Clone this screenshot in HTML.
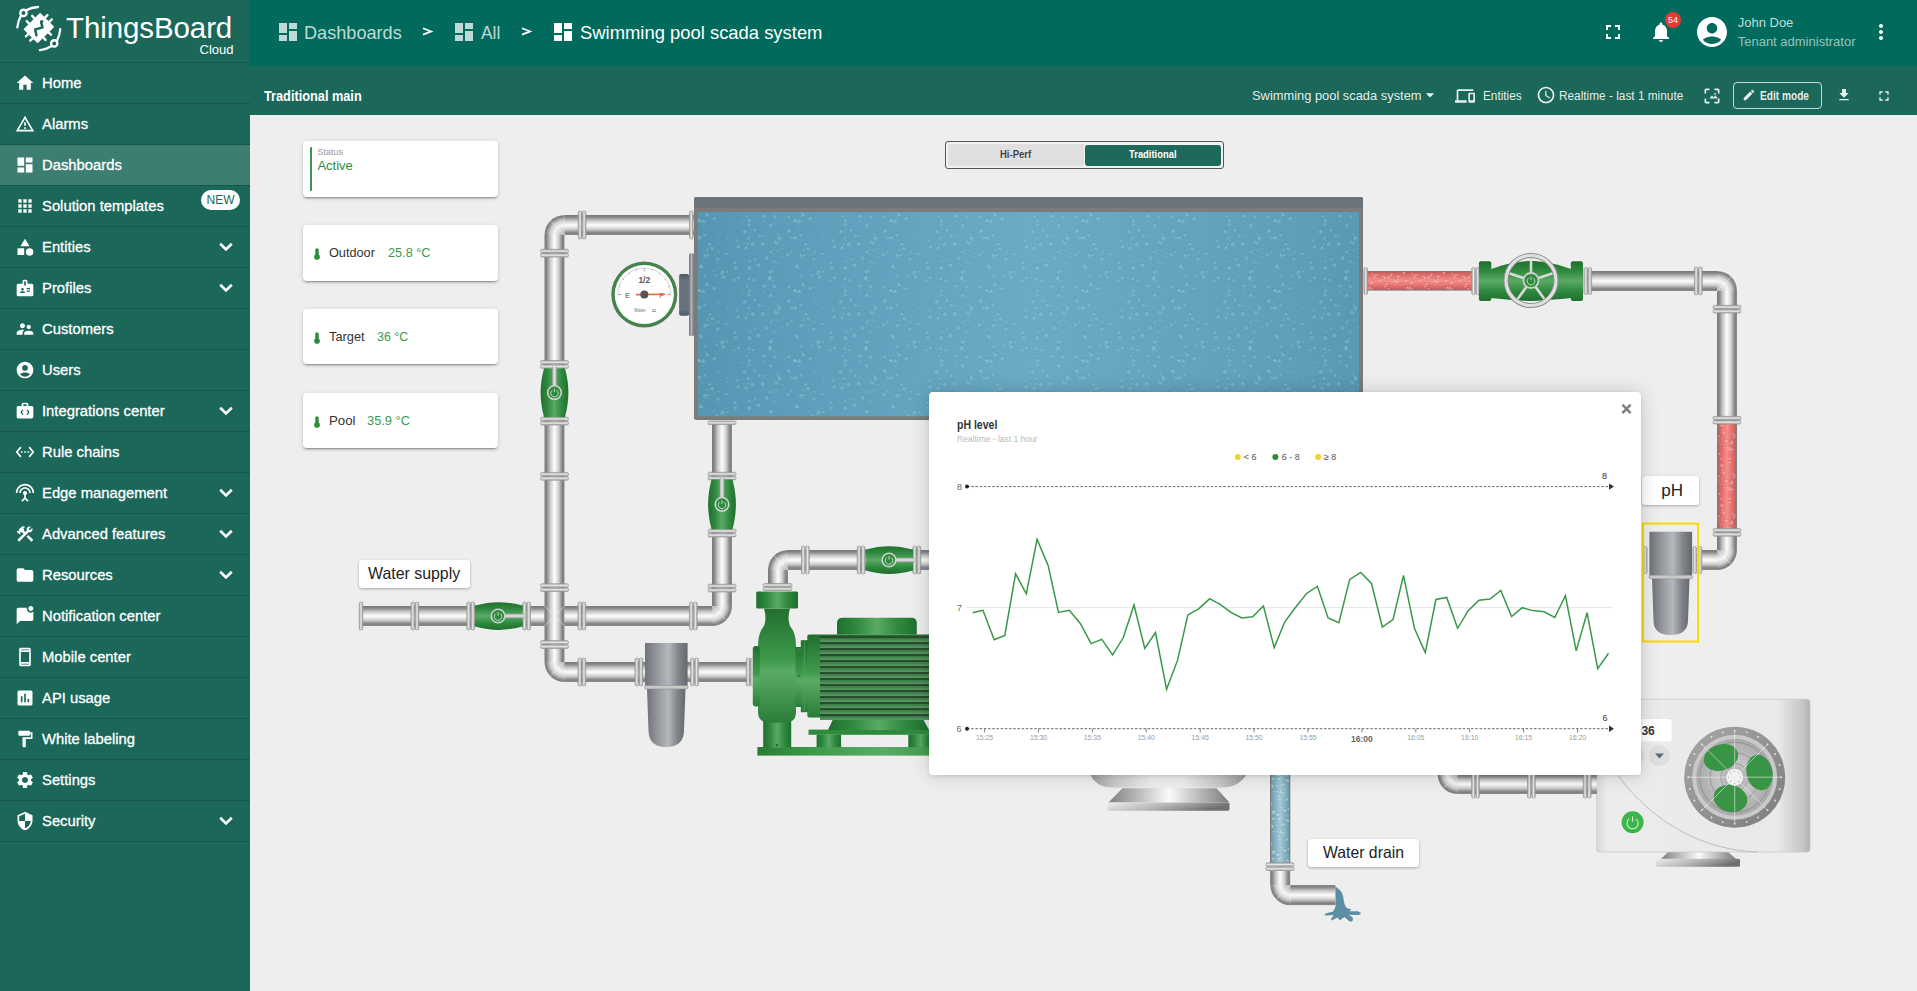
<!DOCTYPE html>
<html><head><meta charset="utf-8">
<style>
*{box-sizing:border-box;margin:0;padding:0}
html,body{width:1917px;height:991px;overflow:hidden;background:#eeeeee;font-family:"Liberation Sans",sans-serif;position:relative}
</style></head><body>
<div style="position:absolute;left:0;top:0;width:250px;height:991px;background:#1b675a;overflow:hidden">
<svg style="position:absolute;left:12px;top:2px" width="54" height="54" viewBox="0 0 991 991">
<g fill="none" stroke="#fff" stroke-width="42" stroke-linecap="round">
<circle cx="210" cy="200" r="58"/><path d="M262 152 Q350 100 478 92"/><path d="M160 255 Q112 350 98 465"/>
<circle cx="775" cy="760" r="58"/><path d="M828 705 Q876 610 885 500"/><path d="M722 812 Q630 868 512 882"/>
</g>
<polygon points="515,215 755,455 470,735 230,500" fill="#fff" stroke="#fff" stroke-width="30" stroke-linejoin="round"/>
<g stroke="#fff" stroke-width="44" stroke-linecap="round">
<path d="M325 405 L270 350 M420 310 L370 255 M595 295 L650 240 M675 375 L730 320 M660 548 L715 600 M565 642 L615 695 M390 657 L335 710 M310 578 L255 630"/>
</g>
<g fill="none" stroke="#1b675a" stroke-width="46" stroke-linecap="round" stroke-linejoin="round">
<path d="M535 375 L560 465 L425 505 L448 612"/>
</g>
<circle cx="545" cy="360" r="30" fill="#1b675a"/>
</svg>
<div style="position:absolute;left:66px;top:12.83px;font-size:29.5px;line-height:29.5px;color:#fff;font-weight:normal;white-space:nowrap;letter-spacing:-0.1px">ThingsBoard</div>
<div style="position:absolute;left:199.5px;top:42.50px;font-size:13px;line-height:13px;color:#fff;font-weight:normal;white-space:nowrap;">Cloud</div>
<div style="position:absolute;left:0;top:62px;width:250px;height:1px;background:rgba(0,0,0,0.18)"></div>
<div style="position:absolute;left:0;top:63px;width:250px;height:40px;background:transparent"></div>
<div style="position:absolute;left:0;top:103px;width:250px;height:1px;background:rgba(0,0,0,0.18)"></div>
<svg style="position:absolute;left:14.5px;top:72.5px;width:20px;height:20px" viewBox="0 0 24 24" ><path fill="#fff" d="M10 20v-6h4v6h5v-8h3L12 3 2 12h3v8z"/></svg>
<div style="position:absolute;left:42.3px;top:75.43px;font-size:15.2px;line-height:15.2px;color:#fff;font-weight:normal;white-space:nowrap;transform:scaleX(0.975);transform-origin:0 0;-webkit-text-stroke:0.3px #fff">Home</div>
<div style="position:absolute;left:0;top:104px;width:250px;height:40px;background:transparent"></div>
<div style="position:absolute;left:0;top:144px;width:250px;height:1px;background:rgba(0,0,0,0.18)"></div>
<svg style="position:absolute;left:14.5px;top:113.5px;width:20px;height:20px" viewBox="0 0 24 24" ><path fill="#fff" d="M12 5.99L19.53 19H4.47L12 5.99M12 2L1 21h22L12 2zm1 14h-2v2h2v-2zm0-6h-2v4h2v-4z"/></svg>
<div style="position:absolute;left:42.3px;top:116.43px;font-size:15.2px;line-height:15.2px;color:#fff;font-weight:normal;white-space:nowrap;transform:scaleX(0.975);transform-origin:0 0;-webkit-text-stroke:0.3px #fff">Alarms</div>
<div style="position:absolute;left:0;top:145px;width:250px;height:40px;background:#3d7e72"></div>
<div style="position:absolute;left:0;top:185px;width:250px;height:1px;background:rgba(0,0,0,0.18)"></div>
<svg style="position:absolute;left:14.5px;top:154.5px;width:20px;height:20px" viewBox="0 0 24 24" ><path fill="#fff" d="M3 13h8V3H3v10zm0 8h8v-6H3v6zm10 0h8V11h-8v10zm0-18v6h8V3h-8z"/></svg>
<div style="position:absolute;left:42.3px;top:157.43px;font-size:15.2px;line-height:15.2px;color:#fff;font-weight:normal;white-space:nowrap;transform:scaleX(0.975);transform-origin:0 0;-webkit-text-stroke:0.3px #fff">Dashboards</div>
<div style="position:absolute;left:0;top:186px;width:250px;height:40px;background:transparent"></div>
<div style="position:absolute;left:0;top:226px;width:250px;height:1px;background:rgba(0,0,0,0.18)"></div>
<svg style="position:absolute;left:14.5px;top:195.5px;width:20px;height:20px" viewBox="0 0 24 24" ><path fill="#fff" d="M4 8h4V4H4v4zm6 12h4v-4h-4v4zm-6 0h4v-4H4v4zm0-6h4v-4H4v4zm6 0h4v-4h-4v4zm6-10v4h4V4h-4zm-6 4h4V4h-4v4zm6 6h4v-4h-4v4zm0 6h4v-4h-4v4z"/></svg>
<div style="position:absolute;left:42.3px;top:198.43px;font-size:15.2px;line-height:15.2px;color:#fff;font-weight:normal;white-space:nowrap;transform:scaleX(0.975);transform-origin:0 0;-webkit-text-stroke:0.3px #fff">Solution templates</div>
<div style="position:absolute;left:0;top:227px;width:250px;height:40px;background:transparent"></div>
<div style="position:absolute;left:0;top:267px;width:250px;height:1px;background:rgba(0,0,0,0.18)"></div>
<svg style="position:absolute;left:14.5px;top:236.5px;width:20px;height:20px" viewBox="0 0 24 24" ><path fill="#fff" d="M12 2l-5.5 9h11zM17.5 13.5a4.5 4.5 0 1 0 0 9 4.5 4.5 0 0 0 0-9zM3 21.5h8v-8H3z"/></svg>
<div style="position:absolute;left:42.3px;top:239.43px;font-size:15.2px;line-height:15.2px;color:#fff;font-weight:normal;white-space:nowrap;transform:scaleX(0.975);transform-origin:0 0;-webkit-text-stroke:0.3px #fff">Entities</div>
<svg style="position:absolute;left:218px;top:239px;width:16px;height:16px" viewBox="0 0 16 16"><path d="M2.2 4.8 L8 10.4 L13.8 4.8" fill="none" stroke="#fff" stroke-width="2.6"/></svg>
<div style="position:absolute;left:0;top:268px;width:250px;height:40px;background:transparent"></div>
<div style="position:absolute;left:0;top:308px;width:250px;height:1px;background:rgba(0,0,0,0.18)"></div>
<svg style="position:absolute;left:14.5px;top:277.5px;width:20px;height:20px" viewBox="0 0 24 24" ><path fill="#fff" d="M20 7h-5V4c0-1.1-.9-2-2-2h-2c-1.1 0-2 .9-2 2v3H4c-1.1 0-2 .9-2 2v11c0 1.1.9 2 2 2h16c1.1 0 2-.9 2-2V9c0-1.1-.9-2-2-2zM9 12c.83 0 1.5.67 1.5 1.5S9.830 15 9 15s-1.5-.67-1.5-1.5S8.17 12 9 12zm3 6H6v-.75c0-1 2-1.5 3-1.5s3 .5 3 1.5V18zm1-9h-2V4h2v5zm5 7.5h-4V15h4v1.5zm0-3h-4V12h4v1.5z"/></svg>
<div style="position:absolute;left:42.3px;top:280.43px;font-size:15.2px;line-height:15.2px;color:#fff;font-weight:normal;white-space:nowrap;transform:scaleX(0.975);transform-origin:0 0;-webkit-text-stroke:0.3px #fff">Profiles</div>
<svg style="position:absolute;left:218px;top:280px;width:16px;height:16px" viewBox="0 0 16 16"><path d="M2.2 4.8 L8 10.4 L13.8 4.8" fill="none" stroke="#fff" stroke-width="2.6"/></svg>
<div style="position:absolute;left:0;top:309px;width:250px;height:40px;background:transparent"></div>
<div style="position:absolute;left:0;top:349px;width:250px;height:1px;background:rgba(0,0,0,0.18)"></div>
<svg style="position:absolute;left:14.5px;top:318.5px;width:20px;height:20px" viewBox="0 0 24 24" ><path fill="#fff" d="M16.5 12c1.38 0 2.49-1.12 2.49-2.5S17.88 7 16.5 7C15.12 7 14 8.12 14 9.5s1.12 2.5 2.5 2.5zM9 11c1.66 0 2.99-1.34 2.99-3S10.66 5 9 5C7.34 5 6 6.34 6 8s1.34 3 3 3zm7.5 3c-1.83 0-5.5.92-5.5 2.75V19h11v-2.25c0-1.830-3.67-2.75-5.5-2.75zM9 13c-2.33 0-7 1.17-7 3.5V19h7v-2.25c0-.85.33-2.34 2.37-3.47C10.5 13.1 9.66 13 9 13z"/></svg>
<div style="position:absolute;left:42.3px;top:321.43px;font-size:15.2px;line-height:15.2px;color:#fff;font-weight:normal;white-space:nowrap;transform:scaleX(0.975);transform-origin:0 0;-webkit-text-stroke:0.3px #fff">Customers</div>
<div style="position:absolute;left:0;top:350px;width:250px;height:40px;background:transparent"></div>
<div style="position:absolute;left:0;top:390px;width:250px;height:1px;background:rgba(0,0,0,0.18)"></div>
<svg style="position:absolute;left:14.5px;top:359.5px;width:20px;height:20px" viewBox="0 0 24 24" ><path fill="#fff" d="M12 2C6.48 2 2 6.48 2 12s4.48 10 10 10 10-4.48 10-10S17.52 2 12 2zm0 4c1.93 0 3.5 1.57 3.5 3.5S13.93 13 12 13s-3.5-1.57-3.5-3.5S10.07 6 12 6zm0 14c-2.03 0-4.43-.82-6.14-2.88C7.55 15.8 9.68 15 12 15s4.45.8 6.14 2.12C16.43 19.18 14.03 20 12 20z"/></svg>
<div style="position:absolute;left:42.3px;top:362.43px;font-size:15.2px;line-height:15.2px;color:#fff;font-weight:normal;white-space:nowrap;transform:scaleX(0.975);transform-origin:0 0;-webkit-text-stroke:0.3px #fff">Users</div>
<div style="position:absolute;left:0;top:391px;width:250px;height:40px;background:transparent"></div>
<div style="position:absolute;left:0;top:431px;width:250px;height:1px;background:rgba(0,0,0,0.18)"></div>
<svg style="position:absolute;left:14.5px;top:400.5px;width:20px;height:20px" viewBox="0 0 24 24" ><path fill="#fff" d="M20 6h-4V4c0-1.11-.89-2-2-2h-4c-1.11 0-2 .89-2 2v2H4c-1.11 0-1.990.89-1.99 2L2 19c0 1.11.89 2 2 2h16c1.11 0 2-.89 2-2V8c0-1.11-.89-2-2-2zm-6 0h-4V4h4v2z"/></svg>
<svg style="position:absolute;left:14.5px;top:400.5px;width:20px;height:20px" viewBox="0 0 24 24"><path d="M9.5 10.5 L7.5 13.5 L9.5 16.5 M14.5 10.5 L16.5 13.5 L14.5 16.5" fill="none" stroke="#1b675a" stroke-width="1.6"/></svg>
<div style="position:absolute;left:42.3px;top:403.43px;font-size:15.2px;line-height:15.2px;color:#fff;font-weight:normal;white-space:nowrap;transform:scaleX(0.975);transform-origin:0 0;-webkit-text-stroke:0.3px #fff">Integrations center</div>
<svg style="position:absolute;left:218px;top:403px;width:16px;height:16px" viewBox="0 0 16 16"><path d="M2.2 4.8 L8 10.4 L13.8 4.8" fill="none" stroke="#fff" stroke-width="2.6"/></svg>
<div style="position:absolute;left:0;top:432px;width:250px;height:40px;background:transparent"></div>
<div style="position:absolute;left:0;top:472px;width:250px;height:1px;background:rgba(0,0,0,0.18)"></div>
<svg style="position:absolute;left:14.5px;top:441.5px;width:20px;height:20px" viewBox="0 0 24 24" ><path fill="#fff" d="M7.77 6.76L6.23 5.48.82 12l5.41 6.52 1.54-1.28L3.42 12l4.35-5.24zM7 13h2v-2H7v2zm10-2h-2v2h2v-2zm-6 2h2v-2h-2v2zm6.77-7.52l-1.54 1.28L20.58 12l-4.35 5.24 1.54 1.28L23.18 12l-5.41-6.520z"/></svg>
<div style="position:absolute;left:42.3px;top:444.43px;font-size:15.2px;line-height:15.2px;color:#fff;font-weight:normal;white-space:nowrap;transform:scaleX(0.975);transform-origin:0 0;-webkit-text-stroke:0.3px #fff">Rule chains</div>
<div style="position:absolute;left:0;top:473px;width:250px;height:40px;background:transparent"></div>
<div style="position:absolute;left:0;top:513px;width:250px;height:1px;background:rgba(0,0,0,0.18)"></div>
<svg style="position:absolute;left:14.5px;top:482.5px;width:20px;height:20px" viewBox="0 0 24 24" ><path fill="#fff" d="M12 5c-3.87 0-7 3.13-7 7h2c0-2.76 2.24-5 5-5s5 2.24 5 5h2c0-3.87-3.13-7-7-7zm1 9.29c.88-.39 1.5-1.26 1.5-2.29 0-1.38-1.12-2.5-2.5-2.5S9.5 10.62 9.5 12c0 1.02.62 1.9 1.5 2.29v3.3L7.59 21 9 22.41l3-3 3 3L16.41 21 13 17.59v-3.3zM12 1C5.93 1 1 5.93 1 12h2c0-4.97 4.03-9 9-9s9 4.03 9 9h2c0-6.07-4.93-11-11-11z"/></svg>
<div style="position:absolute;left:42.3px;top:485.43px;font-size:15.2px;line-height:15.2px;color:#fff;font-weight:normal;white-space:nowrap;transform:scaleX(0.975);transform-origin:0 0;-webkit-text-stroke:0.3px #fff">Edge management</div>
<svg style="position:absolute;left:218px;top:485px;width:16px;height:16px" viewBox="0 0 16 16"><path d="M2.2 4.8 L8 10.4 L13.8 4.8" fill="none" stroke="#fff" stroke-width="2.6"/></svg>
<div style="position:absolute;left:0;top:514px;width:250px;height:40px;background:transparent"></div>
<div style="position:absolute;left:0;top:554px;width:250px;height:1px;background:rgba(0,0,0,0.18)"></div>
<svg style="position:absolute;left:14.5px;top:523.5px;width:20px;height:20px" viewBox="0 0 24 24" ><path fill="#fff" d="M13.783 15.172l2.121-2.121 5.996 5.996-2.121 2.121zM17.5 10c1.93 0 3.5-1.57 3.5-3.5 0-.58-.16-1.12-.41-1.6l-2.7 2.7-1.49-1.49 2.7-2.7c-.48-.25-1.02-.41-1.6-.41C15.57 3 14 4.57 14 6.5c0 .41.08.8.21 1.16l-1.85 1.85-1.78-1.78.71-.71-1.41-1.41L12 3.49c-1.17-1.17-3.07-1.17-4.24 0L4.22 7.030l1.41 1.41H2.81l-.71.71 3.54 3.54.71-.71V9.15l1.41 1.41.71-.71 1.78 1.78-7.41 7.41 2.12 2.12L16.34 9.79c.36.13.75.21 1.160.21z"/></svg>
<div style="position:absolute;left:42.3px;top:526.43px;font-size:15.2px;line-height:15.2px;color:#fff;font-weight:normal;white-space:nowrap;transform:scaleX(0.975);transform-origin:0 0;-webkit-text-stroke:0.3px #fff">Advanced features</div>
<svg style="position:absolute;left:218px;top:526px;width:16px;height:16px" viewBox="0 0 16 16"><path d="M2.2 4.8 L8 10.4 L13.8 4.8" fill="none" stroke="#fff" stroke-width="2.6"/></svg>
<div style="position:absolute;left:0;top:555px;width:250px;height:40px;background:transparent"></div>
<div style="position:absolute;left:0;top:595px;width:250px;height:1px;background:rgba(0,0,0,0.18)"></div>
<svg style="position:absolute;left:14.5px;top:564.5px;width:20px;height:20px" viewBox="0 0 24 24" ><path fill="#fff" d="M10 4H4c-1.1 0-1.99.9-1.99 2L2 18c0 1.1.9 2 2 2h16c1.1 0 2-.9 2-2V8c0-1.1-.9-2-2-2h-8l-2-2z"/></svg>
<div style="position:absolute;left:42.3px;top:567.43px;font-size:15.2px;line-height:15.2px;color:#fff;font-weight:normal;white-space:nowrap;transform:scaleX(0.975);transform-origin:0 0;-webkit-text-stroke:0.3px #fff">Resources</div>
<svg style="position:absolute;left:218px;top:567px;width:16px;height:16px" viewBox="0 0 16 16"><path d="M2.2 4.8 L8 10.4 L13.8 4.8" fill="none" stroke="#fff" stroke-width="2.6"/></svg>
<div style="position:absolute;left:0;top:596px;width:250px;height:40px;background:transparent"></div>
<div style="position:absolute;left:0;top:636px;width:250px;height:1px;background:rgba(0,0,0,0.18)"></div>
<svg style="position:absolute;left:14.5px;top:605.5px;width:20px;height:20px" viewBox="0 0 24 24" ><path fill="#fff" d="M22 6.98V16c0 1.1-.9 2-2 2H6l-4 4V4c0-1.1.9-2 2-2h10.1c-.06.32-.1.66-.1 1 0 2.76 2.24 5 5 5 1.13 0 2.16-.39 3-1.02zM16 3c0 1.66 1.34 3 3 3s3-1.34 3-3-1.34-3-3-3-3 1.34-3 3z"/></svg>
<div style="position:absolute;left:42.3px;top:608.43px;font-size:15.2px;line-height:15.2px;color:#fff;font-weight:normal;white-space:nowrap;transform:scaleX(0.975);transform-origin:0 0;-webkit-text-stroke:0.3px #fff">Notification center</div>
<div style="position:absolute;left:0;top:637px;width:250px;height:40px;background:transparent"></div>
<div style="position:absolute;left:0;top:677px;width:250px;height:1px;background:rgba(0,0,0,0.18)"></div>
<svg style="position:absolute;left:14.5px;top:646.5px;width:20px;height:20px" viewBox="0 0 24 24" ><path fill="#fff" d="M17 1H7c-1.1 0-2 .9-2 2v18c0 1.1.9 2 2 2h10c1.1 0 2-.9 2-2V3c0-1.1-.9-2-2-2zm0 20H7v-1h10v1zm0-3H7V6h10v12zm0-14H7V3h10v1z"/></svg>
<div style="position:absolute;left:42.3px;top:649.43px;font-size:15.2px;line-height:15.2px;color:#fff;font-weight:normal;white-space:nowrap;transform:scaleX(0.975);transform-origin:0 0;-webkit-text-stroke:0.3px #fff">Mobile center</div>
<div style="position:absolute;left:0;top:678px;width:250px;height:40px;background:transparent"></div>
<div style="position:absolute;left:0;top:718px;width:250px;height:1px;background:rgba(0,0,0,0.18)"></div>
<svg style="position:absolute;left:14.5px;top:687.5px;width:20px;height:20px" viewBox="0 0 24 24" ><path fill="#fff" d="M19 3H5c-1.1 0-2 .9-2 2v14c0 1.1.9 2 2 2h14c1.1 0 2-.9 2-2V5c0-1.1-.9-2-2-2zM9 17H7v-7h2v7zm4 0h-2V7h2v10zm4 0h-2v-4h2v4z"/></svg>
<div style="position:absolute;left:42.3px;top:690.43px;font-size:15.2px;line-height:15.2px;color:#fff;font-weight:normal;white-space:nowrap;transform:scaleX(0.975);transform-origin:0 0;-webkit-text-stroke:0.3px #fff">API usage</div>
<div style="position:absolute;left:0;top:719px;width:250px;height:40px;background:transparent"></div>
<div style="position:absolute;left:0;top:759px;width:250px;height:1px;background:rgba(0,0,0,0.18)"></div>
<svg style="position:absolute;left:14.5px;top:728.5px;width:20px;height:20px" viewBox="0 0 24 24" ><path fill="#fff" d="M18 4V3c0-.55-.45-1-1-1H5c-.55 0-1 .45-1 1v4c0 .55.45 1 1 1h12c.55 0 1-.45 1-1V6h1v4H9v11c0 .55.45 1 1 1h2c.55 0 1-.45 1-1v-9h8V4h-3z"/></svg>
<div style="position:absolute;left:42.3px;top:731.43px;font-size:15.2px;line-height:15.2px;color:#fff;font-weight:normal;white-space:nowrap;transform:scaleX(0.975);transform-origin:0 0;-webkit-text-stroke:0.3px #fff">White labeling</div>
<div style="position:absolute;left:0;top:760px;width:250px;height:40px;background:transparent"></div>
<div style="position:absolute;left:0;top:800px;width:250px;height:1px;background:rgba(0,0,0,0.18)"></div>
<svg style="position:absolute;left:14.5px;top:769.5px;width:20px;height:20px" viewBox="0 0 24 24" ><path fill="#fff" d="M19.14 12.94c.04-.3.06-.61.06-.94 0-.32-.02-.64-.07-.94l2.03-1.58c.18-.14.23-.41.12-.61l-1.92-3.32c-.12-.22-.37-.29-.59-.22l-2.39.96c-.5-.38-1.030-.7-1.62-.94l-.36-2.54c-.04-.24-.24-.41-.48-.41h-3.84c-.24 0-.43.17-.47.41l-.36 2.54c-.59.24-1.13.57-1.62.94l-2.39-.96c-.22-.08-.47 0-.59.22L2.74 8.87c-.12.21-.08.47.12.61l2.03 1.58c-.05.3-.09.63-.09.94s.02.64.07.94l-2.03 1.58c-.18.14-.23.41-.12.61l1.92 3.32c.12.22.37.29.59.22l2.39-.96c.5.38 1.03.7 1.62.94l.36 2.54c.05.24.24.41.48.41h3.84c.24 0 .44-.17.47-.41l.36-2.54c.59-.24 1.13-.56 1.62-.94l2.39.96c.22.08.47 0 .59-.22l1.92-3.32c.12-.22.07-.47-.12-.61l-2.01-1.58zM12 15.6c-1.98 0-3.6-1.62-3.6-3.6s1.62-3.6 3.6-3.6 3.6 1.62 3.6 3.6-1.62 3.6-3.6 3.6z"/></svg>
<div style="position:absolute;left:42.3px;top:772.43px;font-size:15.2px;line-height:15.2px;color:#fff;font-weight:normal;white-space:nowrap;transform:scaleX(0.975);transform-origin:0 0;-webkit-text-stroke:0.3px #fff">Settings</div>
<div style="position:absolute;left:0;top:801px;width:250px;height:40px;background:transparent"></div>
<div style="position:absolute;left:0;top:841px;width:250px;height:1px;background:rgba(0,0,0,0.18)"></div>
<svg style="position:absolute;left:14.5px;top:810.5px;width:20px;height:20px" viewBox="0 0 24 24" ><path fill="#fff" d="M12 1L3 5v6c0 5.55 3.84 10.74 9 12 5.16-1.26 9-6.45 9-12V5l-9-4zm0 10.99h7c-.53 4.12-3.28 7.79-7 8.94V12H5V6.3l7-3.11v8.8z"/></svg>
<div style="position:absolute;left:42.3px;top:813.43px;font-size:15.2px;line-height:15.2px;color:#fff;font-weight:normal;white-space:nowrap;transform:scaleX(0.975);transform-origin:0 0;-webkit-text-stroke:0.3px #fff">Security</div>
<svg style="position:absolute;left:218px;top:813px;width:16px;height:16px" viewBox="0 0 16 16"><path d="M2.2 4.8 L8 10.4 L13.8 4.8" fill="none" stroke="#fff" stroke-width="2.6"/></svg>
<div style="position:absolute;left:201px;top:190px;width:39px;height:20px;border-radius:10px;background:#fff;color:#1b675a;font-size:12px;line-height:20px;text-align:center">NEW</div>
</div>
<div style="position:absolute;left:250px;top:0;width:1667px;height:66px;background:#006a5c"></div>
<svg style="position:absolute;left:276.3px;top:19.7px;width:24px;height:24px" viewBox="0 0 24 24" ><path fill="rgba(255,255,255,0.75)" d="M3 13h8V3H3v10zm0 8h8v-6H3v6zm10 0h8V11h-8v10zm0-18v6h8V3h-8z"/></svg>
<div style="position:absolute;left:304.2px;top:24.04px;font-size:18.5px;line-height:18.5px;color:rgba(255,255,255,0.75);font-weight:normal;white-space:nowrap;transform:scaleX(0.98);transform-origin:0 0;">Dashboards</div>
<svg style="position:absolute;left:420px;top:25px;width:14px;height:14px" viewBox="0 0 14 14"><path d="M3 3.2 L11.2 6.4 L3 9.6" fill="none" stroke="#fff" stroke-width="1.7"/></svg>
<svg style="position:absolute;left:452.3px;top:19.7px;width:24px;height:24px" viewBox="0 0 24 24" ><path fill="rgba(255,255,255,0.75)" d="M3 13h8V3H3v10zm0 8h8v-6H3v6zm10 0h8V11h-8v10zm0-18v6h8V3h-8z"/></svg>
<div style="position:absolute;left:480.5px;top:24.04px;font-size:18.5px;line-height:18.5px;color:rgba(255,255,255,0.75);font-weight:normal;white-space:nowrap;transform:scaleX(0.94);transform-origin:0 0;">All</div>
<svg style="position:absolute;left:519.3px;top:25px;width:14px;height:14px" viewBox="0 0 14 14"><path d="M3 3.2 L11.2 6.4 L3 9.6" fill="none" stroke="#fff" stroke-width="1.7"/></svg>
<svg style="position:absolute;left:551.3px;top:19.7px;width:24px;height:24px" viewBox="0 0 24 24" ><path fill="#fff" d="M3 13h8V3H3v10zm0 8h8v-6H3v6zm10 0h8V11h-8v10zm0-18v6h8V3h-8z"/></svg>
<div style="position:absolute;left:580.2px;top:24.34px;font-size:18.5px;line-height:18.5px;color:#fff;font-weight:normal;white-space:nowrap;transform:scaleX(0.995);transform-origin:0 0;">Swimming pool scada system</div>
<svg style="position:absolute;left:1601px;top:20px;width:24px;height:24px" viewBox="0 0 24 24" ><path fill="#fff" d="M7 14H5v5h5v-2H7v-3zm-2-4h2V7h3V5H5v5zm12 7h-3v2h5v-5h-2v3zM14 5v2h3v3h2V5h-5z"/></svg>
<svg style="position:absolute;left:1649px;top:20px;width:24px;height:24px" viewBox="0 0 24 24" ><path fill="#fff" d="M12 22c1.1 0 2-.9 2-2h-4c0 1.1.89 2 2 2zm6-6v-5c0-3.07-1.64-5.64-4.5-6.32V4c0-.83-.67-1.5-1.5-1.5s-1.5.67-1.5 1.5v.68C7.63 5.36 6 7.92 6 11v5l-2 2v1h16v-1l-2-2z"/></svg>
<div style="position:absolute;left:1665px;top:12px;width:16px;height:16px;border-radius:8px;background:#e53935;color:#fff;font-size:9px;line-height:16px;text-align:center">54</div>
<svg style="position:absolute;left:1693.5px;top:13.5px;width:36px;height:36px" viewBox="0 0 24 24" ><path fill="#fff" d="M12 2C6.48 2 2 6.48 2 12s4.48 10 10 10 10-4.48 10-10S17.52 2 12 2zm0 4c1.93 0 3.5 1.57 3.5 3.5S13.93 13 12 13s-3.5-1.57-3.5-3.5S10.07 6 12 6zm0 14c-2.03 0-4.43-.82-6.14-2.88C7.55 15.8 9.68 15 12 15s4.45.8 6.14 2.12C16.43 19.18 14.03 20 12 20z"/></svg>
<div style="position:absolute;left:1737.7px;top:15.90px;font-size:13px;line-height:13px;color:rgba(255,255,255,0.78);font-weight:normal;white-space:nowrap;">John Doe</div>
<div style="position:absolute;left:1737.7px;top:34.90px;font-size:13px;line-height:13px;color:rgba(255,255,255,0.6);font-weight:normal;white-space:nowrap;">Tenant administrator</div>
<svg style="position:absolute;left:1868.5px;top:20px;width:24px;height:24px" viewBox="0 0 24 24" ><path fill="#fff" d="M12 8c1.1 0 2-.9 2-2s-.9-2-2-2-2 .9-2 2 .9 2 2 2zm0 2c-1.1 0-2 .9-2 2s.9 2 2 2 2-.9 2-2-.9-2-2-2zm0 6c-1.1 0-2 .9-2 2s.9 2 2 2 2-.9 2-2-.9-2-2-2z"/></svg>
<div style="position:absolute;left:250px;top:66px;width:1667px;height:48.5px;background:#1b675a"></div>
<div style="position:absolute;left:264.4px;top:89.15px;font-size:14px;line-height:14px;color:#fff;font-weight:bold;white-space:nowrap;transform:scaleX(0.91);transform-origin:0 0;">Traditional main</div>
<div style="position:absolute;left:1251.5px;top:88.70px;font-size:13px;line-height:13px;color:rgba(255,255,255,0.9);font-weight:normal;white-space:nowrap;transform:scaleX(0.99);transform-origin:0 0;">Swimming pool scada system</div>
<svg style="position:absolute;left:1419.5px;top:85.3px;width:20px;height:20px" viewBox="0 0 24 24" ><path fill="rgba(255,255,255,0.9)" d="M7 10l5 5 5-5z"/></svg>
<svg style="position:absolute;left:1455px;top:85.5px;width:20px;height:20px" viewBox="0 0 24 24" ><path fill="rgba(255,255,255,0.9)" d="M4 6h18V4H4c-1.1 0-2 .9-2 2v11H0v3h14v-3H4V6zm19 2h-6c-.55 0-1 .45-1 1v10c0 .55.45 1 1 1h6c.55 0 1-.45 1-1V9c0-.55-.45-1-1-1zm-1 9h-4v-7h4v7z"/></svg>
<div style="position:absolute;left:1483px;top:89.00px;font-size:13px;line-height:13px;color:rgba(255,255,255,0.9);font-weight:normal;white-space:nowrap;transform:scaleX(0.907);transform-origin:0 0;">Entities</div>
<svg style="position:absolute;left:1536.3px;top:85.3px;width:20px;height:20px" viewBox="0 0 24 24" ><path fill="rgba(255,255,255,0.9)" d="M11.99 2C6.47 2 2 6.48 2 12s4.47 10 9.99 10C17.52 22 22 17.52 22 12S17.52 2 11.99 2zM12 20c-4.42 0-8-3.58-8-8s3.58-8 8-8 8 3.58 8 8-3.58 8-8 8zm.5-13H11v6l5.25 3.15.75-1.23-4.5-2.67z"/></svg>
<div style="position:absolute;left:1558.5px;top:88.80px;font-size:13px;line-height:13px;color:rgba(255,255,255,0.9);font-weight:normal;white-space:nowrap;transform:scaleX(0.91);transform-origin:0 0;">Realtime - last 1 minute</div>
<svg style="position:absolute;left:1702px;top:86px;width:20px;height:20px" viewBox="0 0 24 24" ><path fill="rgba(255,255,255,0.9)" d="M3 5v4h2V5h4V3H5c-1.1 0-2 .9-2 2zm2 10H3v4c0 1.1.9 2 2 2h4v-2H5v-4zm14 4h-4v2h4c1.1 0 2-.9 2-2v-4h-2v4zm0-16h-4v2h4v4h2V5c0-1.1-.9-2-2-2zM12 11l-3 4h10l-3-4-2 2.67z M15.5 8.5a1 1 0 1 0 0.01 0z"/></svg>
<div style="position:absolute;left:1733px;top:82px;width:89px;height:27px;border:1px solid rgba(255,255,255,0.75);border-radius:4px"></div>
<svg style="position:absolute;left:1742px;top:88px;width:14px;height:14px" viewBox="0 0 24 24" ><path fill="rgba(255,255,255,0.9)" d="M3 17.25V21h3.75L17.81 9.94l-3.75-3.75L3 17.25zM20.71 7.04c.39-.39.39-1.02 0-1.41l-2.34-2.34c-.39-.39-1.02-.39-1.41 0l-1.83 1.83 3.75 3.75 1.83-1.83z"/></svg>
<div style="position:absolute;left:1760px;top:89.64px;font-size:12px;line-height:12px;color:rgba(255,255,255,0.9);font-weight:bold;white-space:nowrap;transform:scaleX(0.845);transform-origin:0 0;">Edit mode</div>
<svg style="position:absolute;left:1836px;top:87px;width:16px;height:16px" viewBox="0 0 24 24" ><path fill="rgba(255,255,255,0.9)" d="M19 9h-4V3H9v6H5l7 7 7-7zM5 18v2h14v-2H5z"/></svg>
<svg style="position:absolute;left:1876px;top:87.5px;width:16px;height:16px" viewBox="0 0 24 24" ><path fill="rgba(255,255,255,0.9)" d="M7 14H5v5h5v-2H7v-3zm-2-4h2V7h3V5H5v5zm12 7h-3v2h5v-5h-2v3zM14 5v2h3v3h2V5h-5z"/></svg>
<svg style="position:absolute;left:0;top:0" width="1917" height="991" viewBox="0 0 1917 991" font-family="Liberation Sans, sans-serif">

<defs>
<linearGradient id="gH" x1="0" y1="0" x2="0" y2="1">
<stop offset="0" stop-color="#7a7a7a"/><stop offset="0.1" stop-color="#858585"/><stop offset="0.3" stop-color="#cdcdcd"/>
<stop offset="0.5" stop-color="#fdfdfd"/><stop offset="0.7" stop-color="#d2d2d2"/><stop offset="0.9" stop-color="#7f7f7f"/><stop offset="1" stop-color="#8c8c8c"/>
</linearGradient>
<linearGradient id="gV" x1="0" y1="0" x2="1" y2="0">
<stop offset="0" stop-color="#7a7a7a"/><stop offset="0.1" stop-color="#858585"/><stop offset="0.3" stop-color="#cdcdcd"/>
<stop offset="0.5" stop-color="#fdfdfd"/><stop offset="0.7" stop-color="#d2d2d2"/><stop offset="0.9" stop-color="#7f7f7f"/><stop offset="1" stop-color="#8c8c8c"/>
</linearGradient>
<radialGradient id="gE" cx="0" cy="0" r="1" gradientUnits="objectBoundingBox">
<stop offset="0" stop-color="#bdbdbd"/><stop offset="0.5" stop-color="#f8f8f8"/><stop offset="0.75" stop-color="#cccccc"/><stop offset="1" stop-color="#7d7d7d"/>
</radialGradient>
<linearGradient id="gFl" x1="0" y1="0" x2="1" y2="0">
<stop offset="0" stop-color="#a9a9a9"/><stop offset="0.5" stop-color="#e6e6e6"/><stop offset="1" stop-color="#a0a0a0"/>
</linearGradient>
<linearGradient id="gFlV" x1="0" y1="0" x2="0" y2="1">
<stop offset="0" stop-color="#a9a9a9"/><stop offset="0.5" stop-color="#e6e6e6"/><stop offset="1" stop-color="#a0a0a0"/>
</linearGradient>
<linearGradient id="gGreenH" x1="0" y1="0" x2="0" y2="1">
<stop offset="0" stop-color="#1f6f2e"/><stop offset="0.25" stop-color="#2f8a3e"/><stop offset="0.5" stop-color="#5aaa66"/><stop offset="0.75" stop-color="#2f8a3e"/><stop offset="1" stop-color="#1f6f2e"/>
</linearGradient>
<linearGradient id="gGreenV" x1="0" y1="0" x2="1" y2="0">
<stop offset="0" stop-color="#1f6f2e"/><stop offset="0.25" stop-color="#2f8a3e"/><stop offset="0.5" stop-color="#5aaa66"/><stop offset="0.75" stop-color="#2f8a3e"/><stop offset="1" stop-color="#1f6f2e"/>
</linearGradient>
<linearGradient id="gRedH" x1="0" y1="0" x2="0" y2="1">
<stop offset="0" stop-color="#cf5a5a"/><stop offset="0.5" stop-color="#f98f8a"/><stop offset="1" stop-color="#cf5a5a"/>
</linearGradient>
<linearGradient id="gRedV" x1="0" y1="0" x2="1" y2="0">
<stop offset="0" stop-color="#cf5a5a"/><stop offset="0.5" stop-color="#f98f8a"/><stop offset="1" stop-color="#cf5a5a"/>
</linearGradient>
<linearGradient id="gBlueV" x1="0" y1="0" x2="1" y2="0">
<stop offset="0" stop-color="#6b9db0"/><stop offset="0.5" stop-color="#a6cbd8"/><stop offset="1" stop-color="#6b9db0"/>
</linearGradient>
<linearGradient id="gFilt" x1="0" y1="0" x2="1" y2="0">
<stop offset="0" stop-color="#6f7378"/><stop offset="0.2" stop-color="#8a8e93"/><stop offset="0.55" stop-color="#b4b8bc"/><stop offset="0.8" stop-color="#7f8388"/><stop offset="1" stop-color="#65696e"/>
</linearGradient>
<linearGradient id="gWater" x1="0" y1="0" x2="1" y2="0">
<stop offset="0" stop-color="#5597b2"/><stop offset="0.1" stop-color="#5b9db8"/><stop offset="0.5" stop-color="#6aacc6"/><stop offset="0.9" stop-color="#5e9fba"/><stop offset="1" stop-color="#5899b4"/>
</linearGradient>
<pattern id="pDots" x="0" y="0" width="96" height="70" patternUnits="userSpaceOnUse"><circle cx="31.1" cy="11.2" r="2.0" fill="#a9d6e6" opacity="0.3"/><path d="M29.1 10.6 A2.0 2.0 0 0 1 33.1 10.6" fill="none" stroke="#3f7d95" stroke-width="0.6" opacity="0.35"/><circle cx="4.6" cy="57.7" r="0.8" fill="#a9d6e6" opacity="0.3"/><path d="M3.8 57.5 A0.8 0.8 0 0 1 5.4 57.5" fill="none" stroke="#3f7d95" stroke-width="0.6" opacity="0.35"/><circle cx="35.1" cy="4.6" r="1.8" fill="#a9d6e6" opacity="0.3"/><path d="M33.3 4.1 A1.8 1.8 0 0 1 36.9 4.1" fill="none" stroke="#3f7d95" stroke-width="0.6" opacity="0.35"/><circle cx="20.6" cy="6.5" r="1.5" fill="#a9d6e6" opacity="0.3"/><path d="M19.1 6.0 A1.5 1.5 0 0 1 22.1 6.0" fill="none" stroke="#3f7d95" stroke-width="0.6" opacity="0.35"/><circle cx="6.7" cy="6.8" r="1.5" fill="#a9d6e6" opacity="0.3"/><path d="M5.2 6.3 A1.5 1.5 0 0 1 8.2 6.3" fill="none" stroke="#3f7d95" stroke-width="0.6" opacity="0.35"/><circle cx="5.7" cy="39.9" r="1.0" fill="#a9d6e6" opacity="0.3"/><path d="M4.7 39.6 A1.0 1.0 0 0 1 6.7 39.6" fill="none" stroke="#3f7d95" stroke-width="0.6" opacity="0.35"/><circle cx="60.5" cy="41.0" r="0.8" fill="#a9d6e6" opacity="0.3"/><path d="M59.7 40.8 A0.8 0.8 0 0 1 61.3 40.8" fill="none" stroke="#3f7d95" stroke-width="0.6" opacity="0.35"/><circle cx="55.4" cy="28.1" r="1.0" fill="#a9d6e6" opacity="0.3"/><path d="M54.4 27.8 A1.0 1.0 0 0 1 56.4 27.8" fill="none" stroke="#3f7d95" stroke-width="0.6" opacity="0.35"/><circle cx="4.5" cy="60.5" r="1.2" fill="#a9d6e6" opacity="0.3"/><path d="M3.3 60.1 A1.2 1.2 0 0 1 5.7 60.1" fill="none" stroke="#3f7d95" stroke-width="0.6" opacity="0.35"/><circle cx="40.2" cy="38.4" r="1.8" fill="#a9d6e6" opacity="0.3"/><path d="M38.4 37.8 A1.8 1.8 0 0 1 42.0 37.8" fill="none" stroke="#3f7d95" stroke-width="0.6" opacity="0.35"/><circle cx="29.6" cy="57.4" r="1.0" fill="#a9d6e6" opacity="0.3"/><path d="M28.6 57.1 A1.0 1.0 0 0 1 30.6 57.1" fill="none" stroke="#3f7d95" stroke-width="0.6" opacity="0.35"/><circle cx="9.9" cy="40.3" r="1.0" fill="#a9d6e6" opacity="0.3"/><path d="M8.9 40.0 A1.0 1.0 0 0 1 10.9 40.0" fill="none" stroke="#3f7d95" stroke-width="0.6" opacity="0.35"/><circle cx="35.8" cy="38.6" r="0.8" fill="#a9d6e6" opacity="0.3"/><path d="M35.0 38.3 A0.8 0.8 0 0 1 36.6 38.3" fill="none" stroke="#3f7d95" stroke-width="0.6" opacity="0.35"/><circle cx="54.2" cy="43.8" r="1.5" fill="#a9d6e6" opacity="0.3"/><path d="M52.7 43.3 A1.5 1.5 0 0 1 55.7 43.3" fill="none" stroke="#3f7d95" stroke-width="0.6" opacity="0.35"/><circle cx="65.3" cy="30.3" r="1.2" fill="#a9d6e6" opacity="0.3"/><path d="M64.1 29.9 A1.2 1.2 0 0 1 66.5 29.9" fill="none" stroke="#3f7d95" stroke-width="0.6" opacity="0.35"/><circle cx="44.7" cy="65.0" r="1.2" fill="#a9d6e6" opacity="0.3"/><path d="M43.5 64.6 A1.2 1.2 0 0 1 45.9 64.6" fill="none" stroke="#3f7d95" stroke-width="0.6" opacity="0.35"/><circle cx="28.8" cy="56.2" r="2.0" fill="#a9d6e6" opacity="0.3"/><path d="M26.8 55.6 A2.0 2.0 0 0 1 30.8 55.6" fill="none" stroke="#3f7d95" stroke-width="0.6" opacity="0.35"/><circle cx="74.9" cy="6.1" r="1.2" fill="#a9d6e6" opacity="0.3"/><path d="M73.7 5.7 A1.2 1.2 0 0 1 76.1 5.7" fill="none" stroke="#3f7d95" stroke-width="0.6" opacity="0.35"/><circle cx="50.4" cy="61.9" r="2.0" fill="#a9d6e6" opacity="0.3"/><path d="M48.4 61.3 A2.0 2.0 0 0 1 52.4 61.3" fill="none" stroke="#3f7d95" stroke-width="0.6" opacity="0.35"/><circle cx="43.1" cy="42.9" r="0.8" fill="#a9d6e6" opacity="0.3"/><path d="M42.3 42.6 A0.8 0.8 0 0 1 43.9 42.6" fill="none" stroke="#3f7d95" stroke-width="0.6" opacity="0.35"/><circle cx="11.3" cy="29.6" r="1.2" fill="#a9d6e6" opacity="0.3"/><path d="M10.1 29.3 A1.2 1.2 0 0 1 12.5 29.3" fill="none" stroke="#3f7d95" stroke-width="0.6" opacity="0.35"/><circle cx="14.6" cy="34.5" r="0.8" fill="#a9d6e6" opacity="0.3"/><path d="M13.8 34.2 A0.8 0.8 0 0 1 15.4 34.2" fill="none" stroke="#3f7d95" stroke-width="0.6" opacity="0.35"/><circle cx="92.4" cy="6.0" r="1.8" fill="#a9d6e6" opacity="0.3"/><path d="M90.6 5.4 A1.8 1.8 0 0 1 94.2 5.4" fill="none" stroke="#3f7d95" stroke-width="0.6" opacity="0.35"/><circle cx="55.0" cy="61.6" r="1.2" fill="#a9d6e6" opacity="0.3"/><path d="M53.8 61.3 A1.2 1.2 0 0 1 56.2 61.3" fill="none" stroke="#3f7d95" stroke-width="0.6" opacity="0.35"/><circle cx="32.7" cy="25.0" r="1.5" fill="#a9d6e6" opacity="0.3"/><path d="M31.2 24.5 A1.5 1.5 0 0 1 34.2 24.5" fill="none" stroke="#3f7d95" stroke-width="0.6" opacity="0.35"/><circle cx="55.7" cy="32.2" r="0.8" fill="#a9d6e6" opacity="0.3"/><path d="M54.9 31.9 A0.8 0.8 0 0 1 56.5 31.9" fill="none" stroke="#3f7d95" stroke-width="0.6" opacity="0.35"/><circle cx="90.7" cy="33.8" r="2.0" fill="#a9d6e6" opacity="0.3"/><path d="M88.7 33.2 A2.0 2.0 0 0 1 92.7 33.2" fill="none" stroke="#3f7d95" stroke-width="0.6" opacity="0.35"/><circle cx="6.2" cy="51.5" r="1.2" fill="#a9d6e6" opacity="0.3"/><path d="M5.0 51.2 A1.2 1.2 0 0 1 7.4 51.2" fill="none" stroke="#3f7d95" stroke-width="0.6" opacity="0.35"/><circle cx="62.1" cy="70.0" r="1.5" fill="#a9d6e6" opacity="0.3"/><path d="M60.6 69.5 A1.5 1.5 0 0 1 63.6 69.5" fill="none" stroke="#3f7d95" stroke-width="0.6" opacity="0.35"/><circle cx="62.1" cy="-0.0" r="1.5" fill="#a9d6e6" opacity="0.3"/><path d="M60.6 -0.5 A1.5 1.5 0 0 1 63.6 -0.5" fill="none" stroke="#3f7d95" stroke-width="0.6" opacity="0.35"/><circle cx="27.3" cy="27.6" r="2.0" fill="#a9d6e6" opacity="0.3"/><path d="M25.3 27.0 A2.0 2.0 0 0 1 29.3 27.0" fill="none" stroke="#3f7d95" stroke-width="0.6" opacity="0.35"/><circle cx="33.3" cy="66.2" r="1.2" fill="#a9d6e6" opacity="0.3"/><path d="M32.1 65.8 A1.2 1.2 0 0 1 34.5 65.8" fill="none" stroke="#3f7d95" stroke-width="0.6" opacity="0.35"/><circle cx="16.1" cy="8.4" r="0.8" fill="#a9d6e6" opacity="0.3"/><path d="M15.3 8.2 A0.8 0.8 0 0 1 16.9 8.2" fill="none" stroke="#3f7d95" stroke-width="0.6" opacity="0.35"/><circle cx="20.9" cy="20.7" r="2.0" fill="#a9d6e6" opacity="0.3"/><path d="M18.9 20.1 A2.0 2.0 0 0 1 22.9 20.1" fill="none" stroke="#3f7d95" stroke-width="0.6" opacity="0.35"/><circle cx="23.8" cy="27.8" r="1.5" fill="#a9d6e6" opacity="0.3"/><path d="M22.3 27.4 A1.5 1.5 0 0 1 25.3 27.4" fill="none" stroke="#3f7d95" stroke-width="0.6" opacity="0.35"/><circle cx="7.7" cy="32.0" r="1.8" fill="#a9d6e6" opacity="0.3"/><path d="M5.9 31.4 A1.8 1.8 0 0 1 9.5 31.4" fill="none" stroke="#3f7d95" stroke-width="0.6" opacity="0.35"/><circle cx="26.7" cy="10.0" r="1.5" fill="#a9d6e6" opacity="0.3"/><path d="M25.2 9.6 A1.5 1.5 0 0 1 28.2 9.6" fill="none" stroke="#3f7d95" stroke-width="0.6" opacity="0.35"/><circle cx="82.9" cy="19.9" r="1.5" fill="#a9d6e6" opacity="0.3"/><path d="M81.4 19.5 A1.5 1.5 0 0 1 84.4 19.5" fill="none" stroke="#3f7d95" stroke-width="0.6" opacity="0.35"/><circle cx="94.7" cy="48.2" r="1.5" fill="#a9d6e6" opacity="0.3"/><path d="M93.2 47.8 A1.5 1.5 0 0 1 96.2 47.8" fill="none" stroke="#3f7d95" stroke-width="0.6" opacity="0.35"/><circle cx="-1.3" cy="48.2" r="1.5" fill="#a9d6e6" opacity="0.3"/><path d="M-2.8 47.8 A1.5 1.5 0 0 1 0.2 47.8" fill="none" stroke="#3f7d95" stroke-width="0.6" opacity="0.35"/><circle cx="91.9" cy="10.9" r="1.0" fill="#a9d6e6" opacity="0.3"/><path d="M90.9 10.6 A1.0 1.0 0 0 1 92.9 10.6" fill="none" stroke="#3f7d95" stroke-width="0.6" opacity="0.35"/><circle cx="14.5" cy="46.3" r="0.8" fill="#a9d6e6" opacity="0.3"/><path d="M13.7 46.1 A0.8 0.8 0 0 1 15.3 46.1" fill="none" stroke="#3f7d95" stroke-width="0.6" opacity="0.35"/><circle cx="46.6" cy="41.6" r="1.2" fill="#a9d6e6" opacity="0.3"/><path d="M45.4 41.2 A1.2 1.2 0 0 1 47.8 41.2" fill="none" stroke="#3f7d95" stroke-width="0.6" opacity="0.35"/><circle cx="27.1" cy="10.7" r="1.8" fill="#a9d6e6" opacity="0.3"/><path d="M25.3 10.2 A1.8 1.8 0 0 1 28.9 10.2" fill="none" stroke="#3f7d95" stroke-width="0.6" opacity="0.35"/><circle cx="35.4" cy="39.9" r="1.0" fill="#a9d6e6" opacity="0.3"/><path d="M34.4 39.6 A1.0 1.0 0 0 1 36.4 39.6" fill="none" stroke="#3f7d95" stroke-width="0.6" opacity="0.35"/><circle cx="66.3" cy="36.6" r="1.8" fill="#a9d6e6" opacity="0.3"/><path d="M64.5 36.1 A1.8 1.8 0 0 1 68.1 36.1" fill="none" stroke="#3f7d95" stroke-width="0.6" opacity="0.35"/><circle cx="62.9" cy="52.2" r="1.5" fill="#a9d6e6" opacity="0.3"/><path d="M61.4 51.8 A1.5 1.5 0 0 1 64.4 51.8" fill="none" stroke="#3f7d95" stroke-width="0.6" opacity="0.35"/><circle cx="86.4" cy="55.2" r="2.0" fill="#a9d6e6" opacity="0.3"/><path d="M84.4 54.6 A2.0 2.0 0 0 1 88.4 54.6" fill="none" stroke="#3f7d95" stroke-width="0.6" opacity="0.35"/><circle cx="76.6" cy="27.9" r="1.5" fill="#a9d6e6" opacity="0.3"/><path d="M75.1 27.5 A1.5 1.5 0 0 1 78.1 27.5" fill="none" stroke="#3f7d95" stroke-width="0.6" opacity="0.35"/><circle cx="37.8" cy="34.2" r="1.5" fill="#a9d6e6" opacity="0.3"/><path d="M36.3 33.7 A1.5 1.5 0 0 1 39.3 33.7" fill="none" stroke="#3f7d95" stroke-width="0.6" opacity="0.35"/><circle cx="6.0" cy="5.0" r="1.0" fill="#a9d6e6" opacity="0.3"/><path d="M5.0 4.7 A1.0 1.0 0 0 1 7.0 4.7" fill="none" stroke="#3f7d95" stroke-width="0.6" opacity="0.35"/><circle cx="42.3" cy="8.2" r="1.8" fill="#a9d6e6" opacity="0.3"/><path d="M40.5 7.7 A1.8 1.8 0 0 1 44.1 7.7" fill="none" stroke="#3f7d95" stroke-width="0.6" opacity="0.35"/><circle cx="5.0" cy="0.3" r="1.0" fill="#a9d6e6" opacity="0.3"/><path d="M4.0 0.0 A1.0 1.0 0 0 1 6.0 0.0" fill="none" stroke="#3f7d95" stroke-width="0.6" opacity="0.35"/><circle cx="5.0" cy="70.3" r="1.0" fill="#a9d6e6" opacity="0.3"/><path d="M4.0 70.0 A1.0 1.0 0 0 1 6.0 70.0" fill="none" stroke="#3f7d95" stroke-width="0.6" opacity="0.35"/><circle cx="51.5" cy="67.0" r="1.8" fill="#a9d6e6" opacity="0.3"/><path d="M49.7 66.4 A1.8 1.8 0 0 1 53.3 66.4" fill="none" stroke="#3f7d95" stroke-width="0.6" opacity="0.35"/><circle cx="2.4" cy="61.7" r="1.8" fill="#a9d6e6" opacity="0.3"/><path d="M0.6 61.2 A1.8 1.8 0 0 1 4.2 61.2" fill="none" stroke="#3f7d95" stroke-width="0.6" opacity="0.35"/><circle cx="98.4" cy="61.7" r="1.8" fill="#a9d6e6" opacity="0.3"/><path d="M96.6 61.2 A1.8 1.8 0 0 1 100.2 61.2" fill="none" stroke="#3f7d95" stroke-width="0.6" opacity="0.35"/><circle cx="36.1" cy="44.8" r="1.2" fill="#a9d6e6" opacity="0.3"/><path d="M34.9 44.4 A1.2 1.2 0 0 1 37.3 44.4" fill="none" stroke="#3f7d95" stroke-width="0.6" opacity="0.35"/><circle cx="57.8" cy="33.4" r="0.8" fill="#a9d6e6" opacity="0.3"/><path d="M57.0 33.2 A0.8 0.8 0 0 1 58.6 33.2" fill="none" stroke="#3f7d95" stroke-width="0.6" opacity="0.35"/><circle cx="81.5" cy="70.0" r="1.5" fill="#a9d6e6" opacity="0.3"/><path d="M80.0 69.5 A1.5 1.5 0 0 1 83.0 69.5" fill="none" stroke="#3f7d95" stroke-width="0.6" opacity="0.35"/><circle cx="81.5" cy="-0.0" r="1.5" fill="#a9d6e6" opacity="0.3"/><path d="M80.0 -0.5 A1.5 1.5 0 0 1 83.0 -0.5" fill="none" stroke="#3f7d95" stroke-width="0.6" opacity="0.35"/><circle cx="46.1" cy="22.1" r="1.0" fill="#a9d6e6" opacity="0.3"/><path d="M45.1 21.8 A1.0 1.0 0 0 1 47.1 21.8" fill="none" stroke="#3f7d95" stroke-width="0.6" opacity="0.35"/><circle cx="9.8" cy="24.3" r="1.2" fill="#a9d6e6" opacity="0.3"/><path d="M8.6 24.0 A1.2 1.2 0 0 1 11.0 24.0" fill="none" stroke="#3f7d95" stroke-width="0.6" opacity="0.35"/><circle cx="45.9" cy="49.0" r="1.8" fill="#a9d6e6" opacity="0.3"/><path d="M44.1 48.4 A1.8 1.8 0 0 1 47.7 48.4" fill="none" stroke="#3f7d95" stroke-width="0.6" opacity="0.35"/><circle cx="2.2" cy="67.1" r="1.8" fill="#a9d6e6" opacity="0.3"/><path d="M0.4 66.6 A1.8 1.8 0 0 1 4.0 66.6" fill="none" stroke="#3f7d95" stroke-width="0.6" opacity="0.35"/><circle cx="98.2" cy="67.1" r="1.8" fill="#a9d6e6" opacity="0.3"/><path d="M96.4 66.6 A1.8 1.8 0 0 1 100.0 66.6" fill="none" stroke="#3f7d95" stroke-width="0.6" opacity="0.35"/><circle cx="34.7" cy="48.5" r="0.8" fill="#a9d6e6" opacity="0.3"/><path d="M33.9 48.3 A0.8 0.8 0 0 1 35.5 48.3" fill="none" stroke="#3f7d95" stroke-width="0.6" opacity="0.35"/><circle cx="72.8" cy="21.5" r="2.0" fill="#a9d6e6" opacity="0.3"/><path d="M70.8 20.9 A2.0 2.0 0 0 1 74.8 20.9" fill="none" stroke="#3f7d95" stroke-width="0.6" opacity="0.35"/><circle cx="82.9" cy="49.1" r="1.2" fill="#a9d6e6" opacity="0.3"/><path d="M81.7 48.7 A1.2 1.2 0 0 1 84.1 48.7" fill="none" stroke="#3f7d95" stroke-width="0.6" opacity="0.35"/><circle cx="49.8" cy="63.9" r="1.2" fill="#a9d6e6" opacity="0.3"/><path d="M48.6 63.6 A1.2 1.2 0 0 1 51.0 63.6" fill="none" stroke="#3f7d95" stroke-width="0.6" opacity="0.35"/><circle cx="74.1" cy="37.8" r="1.8" fill="#a9d6e6" opacity="0.3"/><path d="M72.3 37.3 A1.8 1.8 0 0 1 75.9 37.3" fill="none" stroke="#3f7d95" stroke-width="0.6" opacity="0.35"/><circle cx="31.6" cy="15.9" r="1.0" fill="#a9d6e6" opacity="0.3"/><path d="M30.6 15.6 A1.0 1.0 0 0 1 32.6 15.6" fill="none" stroke="#3f7d95" stroke-width="0.6" opacity="0.35"/><circle cx="77.4" cy="57.9" r="2.0" fill="#a9d6e6" opacity="0.3"/><path d="M75.4 57.3 A2.0 2.0 0 0 1 79.4 57.3" fill="none" stroke="#3f7d95" stroke-width="0.6" opacity="0.35"/><circle cx="77.1" cy="14.4" r="1.5" fill="#a9d6e6" opacity="0.3"/><path d="M75.6 14.0 A1.5 1.5 0 0 1 78.6 14.0" fill="none" stroke="#3f7d95" stroke-width="0.6" opacity="0.35"/><circle cx="34.1" cy="2.3" r="0.8" fill="#a9d6e6" opacity="0.3"/><path d="M33.3 2.0 A0.8 0.8 0 0 1 34.9 2.0" fill="none" stroke="#3f7d95" stroke-width="0.6" opacity="0.35"/><circle cx="34.1" cy="72.3" r="0.8" fill="#a9d6e6" opacity="0.3"/><path d="M33.3 72.0 A0.8 0.8 0 0 1 34.9 72.0" fill="none" stroke="#3f7d95" stroke-width="0.6" opacity="0.35"/><circle cx="75.9" cy="33.4" r="1.0" fill="#a9d6e6" opacity="0.3"/><path d="M74.9 33.1 A1.0 1.0 0 0 1 76.9 33.1" fill="none" stroke="#3f7d95" stroke-width="0.6" opacity="0.35"/><circle cx="66.5" cy="67.4" r="1.5" fill="#a9d6e6" opacity="0.3"/><path d="M65.0 67.0 A1.5 1.5 0 0 1 68.0 67.0" fill="none" stroke="#3f7d95" stroke-width="0.6" opacity="0.35"/><circle cx="77.6" cy="51.0" r="1.2" fill="#a9d6e6" opacity="0.3"/><path d="M76.4 50.6 A1.2 1.2 0 0 1 78.8 50.6" fill="none" stroke="#3f7d95" stroke-width="0.6" opacity="0.35"/><circle cx="91.7" cy="25.8" r="1.0" fill="#a9d6e6" opacity="0.3"/><path d="M90.7 25.5 A1.0 1.0 0 0 1 92.7 25.5" fill="none" stroke="#3f7d95" stroke-width="0.6" opacity="0.35"/><circle cx="9.8" cy="33.3" r="1.2" fill="#a9d6e6" opacity="0.3"/><path d="M8.6 32.9 A1.2 1.2 0 0 1 11.0 32.9" fill="none" stroke="#3f7d95" stroke-width="0.6" opacity="0.35"/><circle cx="19.6" cy="44.2" r="1.8" fill="#a9d6e6" opacity="0.3"/><path d="M17.8 43.7 A1.8 1.8 0 0 1 21.4 43.7" fill="none" stroke="#3f7d95" stroke-width="0.6" opacity="0.35"/><circle cx="80.7" cy="34.2" r="2.0" fill="#a9d6e6" opacity="0.3"/><path d="M78.7 33.6 A2.0 2.0 0 0 1 82.7 33.6" fill="none" stroke="#3f7d95" stroke-width="0.6" opacity="0.35"/><circle cx="33.0" cy="45.6" r="2.0" fill="#a9d6e6" opacity="0.3"/><path d="M31.0 45.0 A2.0 2.0 0 0 1 35.0 45.0" fill="none" stroke="#3f7d95" stroke-width="0.6" opacity="0.35"/><circle cx="11.5" cy="27.8" r="2.0" fill="#a9d6e6" opacity="0.3"/><path d="M9.5 27.2 A2.0 2.0 0 0 1 13.5 27.2" fill="none" stroke="#3f7d95" stroke-width="0.6" opacity="0.35"/><circle cx="72.0" cy="33.8" r="1.0" fill="#a9d6e6" opacity="0.3"/><path d="M71.0 33.5 A1.0 1.0 0 0 1 73.0 33.5" fill="none" stroke="#3f7d95" stroke-width="0.6" opacity="0.35"/><circle cx="41.7" cy="44.7" r="0.8" fill="#a9d6e6" opacity="0.3"/><path d="M40.9 44.5 A0.8 0.8 0 0 1 42.5 44.5" fill="none" stroke="#3f7d95" stroke-width="0.6" opacity="0.35"/><circle cx="76.9" cy="68.5" r="1.5" fill="#a9d6e6" opacity="0.3"/><path d="M75.4 68.0 A1.5 1.5 0 0 1 78.4 68.0" fill="none" stroke="#3f7d95" stroke-width="0.6" opacity="0.35"/><circle cx="76.9" cy="-1.5" r="1.5" fill="#a9d6e6" opacity="0.3"/><path d="M75.4 -2.0 A1.5 1.5 0 0 1 78.4 -2.0" fill="none" stroke="#3f7d95" stroke-width="0.6" opacity="0.35"/><circle cx="44.5" cy="52.3" r="0.8" fill="#a9d6e6" opacity="0.3"/><path d="M43.7 52.0 A0.8 0.8 0 0 1 45.3 52.0" fill="none" stroke="#3f7d95" stroke-width="0.6" opacity="0.35"/><circle cx="69.6" cy="12.2" r="1.0" fill="#a9d6e6" opacity="0.3"/><path d="M68.6 11.9 A1.0 1.0 0 0 1 70.6 11.9" fill="none" stroke="#3f7d95" stroke-width="0.6" opacity="0.35"/><circle cx="2.6" cy="41.8" r="1.5" fill="#a9d6e6" opacity="0.3"/><path d="M1.1 41.4 A1.5 1.5 0 0 1 4.1 41.4" fill="none" stroke="#3f7d95" stroke-width="0.6" opacity="0.35"/><circle cx="98.6" cy="41.8" r="1.5" fill="#a9d6e6" opacity="0.3"/><path d="M97.1 41.4 A1.5 1.5 0 0 1 100.1 41.4" fill="none" stroke="#3f7d95" stroke-width="0.6" opacity="0.35"/><circle cx="77.4" cy="10.8" r="1.8" fill="#a9d6e6" opacity="0.3"/><path d="M75.6 10.2 A1.8 1.8 0 0 1 79.2 10.2" fill="none" stroke="#3f7d95" stroke-width="0.6" opacity="0.35"/><circle cx="94.1" cy="46.4" r="1.2" fill="#a9d6e6" opacity="0.3"/><path d="M92.9 46.0 A1.2 1.2 0 0 1 95.3 46.0" fill="none" stroke="#3f7d95" stroke-width="0.6" opacity="0.35"/><circle cx="-1.9" cy="46.4" r="1.2" fill="#a9d6e6" opacity="0.3"/><path d="M-3.1 46.0 A1.2 1.2 0 0 1 -0.7 46.0" fill="none" stroke="#3f7d95" stroke-width="0.6" opacity="0.35"/><circle cx="15.0" cy="38.6" r="0.8" fill="#a9d6e6" opacity="0.3"/><path d="M14.2 38.4 A0.8 0.8 0 0 1 15.8 38.4" fill="none" stroke="#3f7d95" stroke-width="0.6" opacity="0.35"/><circle cx="1.4" cy="68.6" r="2.0" fill="#a9d6e6" opacity="0.3"/><path d="M-0.6 68.0 A2.0 2.0 0 0 1 3.4 68.0" fill="none" stroke="#3f7d95" stroke-width="0.6" opacity="0.35"/><circle cx="1.4" cy="-1.4" r="2.0" fill="#a9d6e6" opacity="0.3"/><path d="M-0.6 -2.0 A2.0 2.0 0 0 1 3.4 -2.0" fill="none" stroke="#3f7d95" stroke-width="0.6" opacity="0.35"/><circle cx="97.4" cy="68.6" r="2.0" fill="#a9d6e6" opacity="0.3"/><path d="M95.4 68.0 A2.0 2.0 0 0 1 99.4 68.0" fill="none" stroke="#3f7d95" stroke-width="0.6" opacity="0.35"/><circle cx="97.4" cy="-1.4" r="2.0" fill="#a9d6e6" opacity="0.3"/><path d="M95.4 -2.0 A2.0 2.0 0 0 1 99.4 -2.0" fill="none" stroke="#3f7d95" stroke-width="0.6" opacity="0.35"/><circle cx="9.9" cy="52.8" r="1.0" fill="#a9d6e6" opacity="0.3"/><path d="M8.9 52.5 A1.0 1.0 0 0 1 10.9 52.5" fill="none" stroke="#3f7d95" stroke-width="0.6" opacity="0.35"/><circle cx="41.6" cy="61.3" r="1.0" fill="#a9d6e6" opacity="0.3"/><path d="M40.6 61.0 A1.0 1.0 0 0 1 42.6 61.0" fill="none" stroke="#3f7d95" stroke-width="0.6" opacity="0.35"/><circle cx="2.7" cy="15.4" r="1.8" fill="#a9d6e6" opacity="0.3"/><path d="M0.9 14.9 A1.8 1.8 0 0 1 4.5 14.9" fill="none" stroke="#3f7d95" stroke-width="0.6" opacity="0.35"/><circle cx="98.7" cy="15.4" r="1.8" fill="#a9d6e6" opacity="0.3"/><path d="M96.9 14.9 A1.8 1.8 0 0 1 100.5 14.9" fill="none" stroke="#3f7d95" stroke-width="0.6" opacity="0.35"/><circle cx="23.1" cy="41.4" r="1.2" fill="#a9d6e6" opacity="0.3"/><path d="M21.9 41.1 A1.2 1.2 0 0 1 24.3 41.1" fill="none" stroke="#3f7d95" stroke-width="0.6" opacity="0.35"/><circle cx="52.3" cy="58.6" r="0.8" fill="#a9d6e6" opacity="0.3"/><path d="M51.5 58.4 A0.8 0.8 0 0 1 53.1 58.4" fill="none" stroke="#3f7d95" stroke-width="0.6" opacity="0.35"/><circle cx="87.4" cy="25.2" r="1.5" fill="#a9d6e6" opacity="0.3"/><path d="M85.9 24.8 A1.5 1.5 0 0 1 88.9 24.8" fill="none" stroke="#3f7d95" stroke-width="0.6" opacity="0.35"/><circle cx="63.6" cy="57.6" r="1.8" fill="#a9d6e6" opacity="0.3"/><path d="M61.8 57.1 A1.8 1.8 0 0 1 65.4 57.1" fill="none" stroke="#3f7d95" stroke-width="0.6" opacity="0.35"/></pattern>
<pattern id="pDotsR" x="0" y="0" width="40" height="40" patternUnits="userSpaceOnUse"><circle cx="9.5" cy="22.1" r="1.1" fill="#ffd6d2" opacity="0.45"/><path d="M8.4 21.8 A1.1 1.1 0 0 1 10.6 21.8" fill="none" stroke="#a94a4a" stroke-width="0.5" opacity="0.5"/><circle cx="36.6" cy="19.2" r="0.7" fill="#ffd6d2" opacity="0.45"/><path d="M35.9 19.0 A0.7 0.7 0 0 1 37.3 19.0" fill="none" stroke="#a94a4a" stroke-width="0.5" opacity="0.5"/><circle cx="24.2" cy="36.7" r="1.3" fill="#ffd6d2" opacity="0.45"/><path d="M22.9 36.4 A1.3 1.3 0 0 1 25.5 36.4" fill="none" stroke="#a94a4a" stroke-width="0.5" opacity="0.5"/><circle cx="10.4" cy="9.8" r="1.3" fill="#ffd6d2" opacity="0.45"/><path d="M9.1 9.4 A1.3 1.3 0 0 1 11.7 9.4" fill="none" stroke="#a94a4a" stroke-width="0.5" opacity="0.5"/><circle cx="21.6" cy="22.4" r="1.3" fill="#ffd6d2" opacity="0.45"/><path d="M20.3 22.0 A1.3 1.3 0 0 1 22.9 22.0" fill="none" stroke="#a94a4a" stroke-width="0.5" opacity="0.5"/><circle cx="25.6" cy="6.3" r="0.9" fill="#ffd6d2" opacity="0.45"/><path d="M24.7 6.0 A0.9 0.9 0 0 1 26.5 6.0" fill="none" stroke="#a94a4a" stroke-width="0.5" opacity="0.5"/><circle cx="34.7" cy="21.1" r="0.7" fill="#ffd6d2" opacity="0.45"/><path d="M34.0 20.9 A0.7 0.7 0 0 1 35.4 20.9" fill="none" stroke="#a94a4a" stroke-width="0.5" opacity="0.5"/><circle cx="26.9" cy="2.8" r="0.7" fill="#ffd6d2" opacity="0.45"/><path d="M26.2 2.6 A0.7 0.7 0 0 1 27.6 2.6" fill="none" stroke="#a94a4a" stroke-width="0.5" opacity="0.5"/><circle cx="26.9" cy="42.8" r="0.7" fill="#ffd6d2" opacity="0.45"/><path d="M26.2 42.6 A0.7 0.7 0 0 1 27.6 42.6" fill="none" stroke="#a94a4a" stroke-width="0.5" opacity="0.5"/><circle cx="12.1" cy="1.6" r="1.1" fill="#ffd6d2" opacity="0.45"/><path d="M11.0 1.2 A1.1 1.1 0 0 1 13.2 1.2" fill="none" stroke="#a94a4a" stroke-width="0.5" opacity="0.5"/><circle cx="12.1" cy="41.6" r="1.1" fill="#ffd6d2" opacity="0.45"/><path d="M11.0 41.2 A1.1 1.1 0 0 1 13.2 41.2" fill="none" stroke="#a94a4a" stroke-width="0.5" opacity="0.5"/><circle cx="18.9" cy="29.1" r="1.3" fill="#ffd6d2" opacity="0.45"/><path d="M17.6 28.8 A1.3 1.3 0 0 1 20.2 28.8" fill="none" stroke="#a94a4a" stroke-width="0.5" opacity="0.5"/><circle cx="28.6" cy="37.2" r="1.3" fill="#ffd6d2" opacity="0.45"/><path d="M27.3 36.8 A1.3 1.3 0 0 1 29.9 36.8" fill="none" stroke="#a94a4a" stroke-width="0.5" opacity="0.5"/><circle cx="29.1" cy="23.3" r="0.9" fill="#ffd6d2" opacity="0.45"/><path d="M28.2 23.1 A0.9 0.9 0 0 1 30.0 23.1" fill="none" stroke="#a94a4a" stroke-width="0.5" opacity="0.5"/><circle cx="35.2" cy="4.2" r="0.9" fill="#ffd6d2" opacity="0.45"/><path d="M34.3 3.9 A0.9 0.9 0 0 1 36.1 3.9" fill="none" stroke="#a94a4a" stroke-width="0.5" opacity="0.5"/><circle cx="19.8" cy="10.7" r="1.3" fill="#ffd6d2" opacity="0.45"/><path d="M18.5 10.3 A1.3 1.3 0 0 1 21.1 10.3" fill="none" stroke="#a94a4a" stroke-width="0.5" opacity="0.5"/><circle cx="31.2" cy="34.6" r="1.3" fill="#ffd6d2" opacity="0.45"/><path d="M29.9 34.2 A1.3 1.3 0 0 1 32.5 34.2" fill="none" stroke="#a94a4a" stroke-width="0.5" opacity="0.5"/><circle cx="20.3" cy="15.8" r="1.1" fill="#ffd6d2" opacity="0.45"/><path d="M19.2 15.4 A1.1 1.1 0 0 1 21.4 15.4" fill="none" stroke="#a94a4a" stroke-width="0.5" opacity="0.5"/><circle cx="21.4" cy="16.6" r="0.9" fill="#ffd6d2" opacity="0.45"/><path d="M20.5 16.3 A0.9 0.9 0 0 1 22.3 16.3" fill="none" stroke="#a94a4a" stroke-width="0.5" opacity="0.5"/><circle cx="36.2" cy="27.5" r="0.7" fill="#ffd6d2" opacity="0.45"/><path d="M35.5 27.3 A0.7 0.7 0 0 1 36.9 27.3" fill="none" stroke="#a94a4a" stroke-width="0.5" opacity="0.5"/><circle cx="34.3" cy="39.9" r="0.9" fill="#ffd6d2" opacity="0.45"/><path d="M33.4 39.6 A0.9 0.9 0 0 1 35.2 39.6" fill="none" stroke="#a94a4a" stroke-width="0.5" opacity="0.5"/><circle cx="34.3" cy="-0.1" r="0.9" fill="#ffd6d2" opacity="0.45"/><path d="M33.4 -0.4 A0.9 0.9 0 0 1 35.2 -0.4" fill="none" stroke="#a94a4a" stroke-width="0.5" opacity="0.5"/><circle cx="27.9" cy="13.3" r="0.7" fill="#ffd6d2" opacity="0.45"/><path d="M27.2 13.1 A0.7 0.7 0 0 1 28.6 13.1" fill="none" stroke="#a94a4a" stroke-width="0.5" opacity="0.5"/><circle cx="28.6" cy="8.8" r="1.1" fill="#ffd6d2" opacity="0.45"/><path d="M27.5 8.4 A1.1 1.1 0 0 1 29.7 8.4" fill="none" stroke="#a94a4a" stroke-width="0.5" opacity="0.5"/><circle cx="11.4" cy="2.9" r="1.3" fill="#ffd6d2" opacity="0.45"/><path d="M10.1 2.5 A1.3 1.3 0 0 1 12.7 2.5" fill="none" stroke="#a94a4a" stroke-width="0.5" opacity="0.5"/><circle cx="11.4" cy="42.9" r="1.3" fill="#ffd6d2" opacity="0.45"/><path d="M10.1 42.5 A1.3 1.3 0 0 1 12.7 42.5" fill="none" stroke="#a94a4a" stroke-width="0.5" opacity="0.5"/><circle cx="3.5" cy="32.4" r="1.3" fill="#ffd6d2" opacity="0.45"/><path d="M2.2 32.0 A1.3 1.3 0 0 1 4.8 32.0" fill="none" stroke="#a94a4a" stroke-width="0.5" opacity="0.5"/><circle cx="35.9" cy="1.2" r="1.3" fill="#ffd6d2" opacity="0.45"/><path d="M34.6 0.8 A1.3 1.3 0 0 1 37.2 0.8" fill="none" stroke="#a94a4a" stroke-width="0.5" opacity="0.5"/><circle cx="35.9" cy="41.2" r="1.3" fill="#ffd6d2" opacity="0.45"/><path d="M34.6 40.8 A1.3 1.3 0 0 1 37.2 40.8" fill="none" stroke="#a94a4a" stroke-width="0.5" opacity="0.5"/><circle cx="30.8" cy="35.1" r="0.7" fill="#ffd6d2" opacity="0.45"/><path d="M30.1 34.9 A0.7 0.7 0 0 1 31.5 34.9" fill="none" stroke="#a94a4a" stroke-width="0.5" opacity="0.5"/><circle cx="24.2" cy="30.9" r="1.3" fill="#ffd6d2" opacity="0.45"/><path d="M22.9 30.5 A1.3 1.3 0 0 1 25.5 30.5" fill="none" stroke="#a94a4a" stroke-width="0.5" opacity="0.5"/><circle cx="28.7" cy="13.6" r="1.1" fill="#ffd6d2" opacity="0.45"/><path d="M27.6 13.2 A1.1 1.1 0 0 1 29.8 13.2" fill="none" stroke="#a94a4a" stroke-width="0.5" opacity="0.5"/><circle cx="20.2" cy="40.3" r="1.1" fill="#ffd6d2" opacity="0.45"/><path d="M19.1 39.9 A1.1 1.1 0 0 1 21.3 39.9" fill="none" stroke="#a94a4a" stroke-width="0.5" opacity="0.5"/><circle cx="20.2" cy="0.3" r="1.1" fill="#ffd6d2" opacity="0.45"/><path d="M19.1 -0.1 A1.1 1.1 0 0 1 21.3 -0.1" fill="none" stroke="#a94a4a" stroke-width="0.5" opacity="0.5"/><circle cx="0.3" cy="4.5" r="0.7" fill="#ffd6d2" opacity="0.45"/><path d="M-0.4 4.3 A0.7 0.7 0 0 1 1.0 4.3" fill="none" stroke="#a94a4a" stroke-width="0.5" opacity="0.5"/><circle cx="40.3" cy="4.5" r="0.7" fill="#ffd6d2" opacity="0.45"/><path d="M39.6 4.3 A0.7 0.7 0 0 1 41.0 4.3" fill="none" stroke="#a94a4a" stroke-width="0.5" opacity="0.5"/><circle cx="38.0" cy="39.2" r="1.1" fill="#ffd6d2" opacity="0.45"/><path d="M36.9 38.9 A1.1 1.1 0 0 1 39.1 38.9" fill="none" stroke="#a94a4a" stroke-width="0.5" opacity="0.5"/><circle cx="38.0" cy="-0.8" r="1.1" fill="#ffd6d2" opacity="0.45"/><path d="M36.9 -1.1 A1.1 1.1 0 0 1 39.1 -1.1" fill="none" stroke="#a94a4a" stroke-width="0.5" opacity="0.5"/><circle cx="-2.0" cy="39.2" r="1.1" fill="#ffd6d2" opacity="0.45"/><path d="M-3.1 38.9 A1.1 1.1 0 0 1 -0.9 38.9" fill="none" stroke="#a94a4a" stroke-width="0.5" opacity="0.5"/><circle cx="-2.0" cy="-0.8" r="1.1" fill="#ffd6d2" opacity="0.45"/><path d="M-3.1 -1.1 A1.1 1.1 0 0 1 -0.9 -1.1" fill="none" stroke="#a94a4a" stroke-width="0.5" opacity="0.5"/><circle cx="24.4" cy="6.5" r="0.7" fill="#ffd6d2" opacity="0.45"/><path d="M23.7 6.2 A0.7 0.7 0 0 1 25.1 6.2" fill="none" stroke="#a94a4a" stroke-width="0.5" opacity="0.5"/><circle cx="39.2" cy="13.9" r="1.1" fill="#ffd6d2" opacity="0.45"/><path d="M38.1 13.6 A1.1 1.1 0 0 1 40.3 13.6" fill="none" stroke="#a94a4a" stroke-width="0.5" opacity="0.5"/><circle cx="-0.8" cy="13.9" r="1.1" fill="#ffd6d2" opacity="0.45"/><path d="M-1.9 13.6 A1.1 1.1 0 0 1 0.3 13.6" fill="none" stroke="#a94a4a" stroke-width="0.5" opacity="0.5"/><circle cx="38.3" cy="36.3" r="1.3" fill="#ffd6d2" opacity="0.45"/><path d="M37.0 35.9 A1.3 1.3 0 0 1 39.6 35.9" fill="none" stroke="#a94a4a" stroke-width="0.5" opacity="0.5"/><circle cx="-1.7" cy="36.3" r="1.3" fill="#ffd6d2" opacity="0.45"/><path d="M-3.0 35.9 A1.3 1.3 0 0 1 -0.4 35.9" fill="none" stroke="#a94a4a" stroke-width="0.5" opacity="0.5"/><circle cx="15.1" cy="35.2" r="1.3" fill="#ffd6d2" opacity="0.45"/><path d="M13.8 34.8 A1.3 1.3 0 0 1 16.4 34.8" fill="none" stroke="#a94a4a" stroke-width="0.5" opacity="0.5"/><circle cx="25.8" cy="24.0" r="0.7" fill="#ffd6d2" opacity="0.45"/><path d="M25.1 23.8 A0.7 0.7 0 0 1 26.5 23.8" fill="none" stroke="#a94a4a" stroke-width="0.5" opacity="0.5"/><circle cx="24.8" cy="38.0" r="1.1" fill="#ffd6d2" opacity="0.45"/><path d="M23.7 37.6 A1.1 1.1 0 0 1 25.9 37.6" fill="none" stroke="#a94a4a" stroke-width="0.5" opacity="0.5"/><circle cx="24.8" cy="-2.0" r="1.1" fill="#ffd6d2" opacity="0.45"/><path d="M23.7 -2.4 A1.1 1.1 0 0 1 25.9 -2.4" fill="none" stroke="#a94a4a" stroke-width="0.5" opacity="0.5"/><circle cx="17.2" cy="29.1" r="0.9" fill="#ffd6d2" opacity="0.45"/><path d="M16.3 28.8 A0.9 0.9 0 0 1 18.1 28.8" fill="none" stroke="#a94a4a" stroke-width="0.5" opacity="0.5"/><circle cx="37.5" cy="17.8" r="1.1" fill="#ffd6d2" opacity="0.45"/><path d="M36.4 17.5 A1.1 1.1 0 0 1 38.6 17.5" fill="none" stroke="#a94a4a" stroke-width="0.5" opacity="0.5"/><circle cx="-2.5" cy="17.8" r="1.1" fill="#ffd6d2" opacity="0.45"/><path d="M-3.6 17.5 A1.1 1.1 0 0 1 -1.4 17.5" fill="none" stroke="#a94a4a" stroke-width="0.5" opacity="0.5"/><circle cx="20.8" cy="22.1" r="0.7" fill="#ffd6d2" opacity="0.45"/><path d="M20.1 21.9 A0.7 0.7 0 0 1 21.5 21.9" fill="none" stroke="#a94a4a" stroke-width="0.5" opacity="0.5"/><circle cx="31.5" cy="39.8" r="1.1" fill="#ffd6d2" opacity="0.45"/><path d="M30.4 39.5 A1.1 1.1 0 0 1 32.6 39.5" fill="none" stroke="#a94a4a" stroke-width="0.5" opacity="0.5"/><circle cx="31.5" cy="-0.2" r="1.1" fill="#ffd6d2" opacity="0.45"/><path d="M30.4 -0.5 A1.1 1.1 0 0 1 32.6 -0.5" fill="none" stroke="#a94a4a" stroke-width="0.5" opacity="0.5"/><circle cx="0.8" cy="24.9" r="0.9" fill="#ffd6d2" opacity="0.45"/><path d="M-0.1 24.6 A0.9 0.9 0 0 1 1.7 24.6" fill="none" stroke="#a94a4a" stroke-width="0.5" opacity="0.5"/><circle cx="40.8" cy="24.9" r="0.9" fill="#ffd6d2" opacity="0.45"/><path d="M39.9 24.6 A0.9 0.9 0 0 1 41.7 24.6" fill="none" stroke="#a94a4a" stroke-width="0.5" opacity="0.5"/><circle cx="2.4" cy="25.5" r="1.3" fill="#ffd6d2" opacity="0.45"/><path d="M1.1 25.1 A1.3 1.3 0 0 1 3.7 25.1" fill="none" stroke="#a94a4a" stroke-width="0.5" opacity="0.5"/><circle cx="42.4" cy="25.5" r="1.3" fill="#ffd6d2" opacity="0.45"/><path d="M41.1 25.1 A1.3 1.3 0 0 1 43.7 25.1" fill="none" stroke="#a94a4a" stroke-width="0.5" opacity="0.5"/><circle cx="14.1" cy="37.0" r="1.1" fill="#ffd6d2" opacity="0.45"/><path d="M13.0 36.7 A1.1 1.1 0 0 1 15.2 36.7" fill="none" stroke="#a94a4a" stroke-width="0.5" opacity="0.5"/><circle cx="29.5" cy="1.1" r="0.7" fill="#ffd6d2" opacity="0.45"/><path d="M28.8 0.9 A0.7 0.7 0 0 1 30.2 0.9" fill="none" stroke="#a94a4a" stroke-width="0.5" opacity="0.5"/><circle cx="29.5" cy="41.1" r="0.7" fill="#ffd6d2" opacity="0.45"/><path d="M28.8 40.9 A0.7 0.7 0 0 1 30.2 40.9" fill="none" stroke="#a94a4a" stroke-width="0.5" opacity="0.5"/><circle cx="38.2" cy="1.2" r="1.1" fill="#ffd6d2" opacity="0.45"/><path d="M37.1 0.9 A1.1 1.1 0 0 1 39.3 0.9" fill="none" stroke="#a94a4a" stroke-width="0.5" opacity="0.5"/><circle cx="38.2" cy="41.2" r="1.1" fill="#ffd6d2" opacity="0.45"/><path d="M37.1 40.9 A1.1 1.1 0 0 1 39.3 40.9" fill="none" stroke="#a94a4a" stroke-width="0.5" opacity="0.5"/><circle cx="-1.8" cy="1.2" r="1.1" fill="#ffd6d2" opacity="0.45"/><path d="M-2.9 0.9 A1.1 1.1 0 0 1 -0.7 0.9" fill="none" stroke="#a94a4a" stroke-width="0.5" opacity="0.5"/><circle cx="-1.8" cy="41.2" r="1.1" fill="#ffd6d2" opacity="0.45"/><path d="M-2.9 40.9 A1.1 1.1 0 0 1 -0.7 40.9" fill="none" stroke="#a94a4a" stroke-width="0.5" opacity="0.5"/><circle cx="10.0" cy="18.6" r="1.1" fill="#ffd6d2" opacity="0.45"/><path d="M8.9 18.3 A1.1 1.1 0 0 1 11.1 18.3" fill="none" stroke="#a94a4a" stroke-width="0.5" opacity="0.5"/><circle cx="7.1" cy="7.7" r="1.1" fill="#ffd6d2" opacity="0.45"/><path d="M6.0 7.4 A1.1 1.1 0 0 1 8.2 7.4" fill="none" stroke="#a94a4a" stroke-width="0.5" opacity="0.5"/><circle cx="33.8" cy="11.0" r="1.3" fill="#ffd6d2" opacity="0.45"/><path d="M32.5 10.6 A1.3 1.3 0 0 1 35.1 10.6" fill="none" stroke="#a94a4a" stroke-width="0.5" opacity="0.5"/><circle cx="4.2" cy="32.8" r="0.9" fill="#ffd6d2" opacity="0.45"/><path d="M3.3 32.5 A0.9 0.9 0 0 1 5.1 32.5" fill="none" stroke="#a94a4a" stroke-width="0.5" opacity="0.5"/><circle cx="12.4" cy="9.2" r="1.1" fill="#ffd6d2" opacity="0.45"/><path d="M11.3 8.9 A1.1 1.1 0 0 1 13.5 8.9" fill="none" stroke="#a94a4a" stroke-width="0.5" opacity="0.5"/><circle cx="9.5" cy="7.9" r="1.3" fill="#ffd6d2" opacity="0.45"/><path d="M8.2 7.5 A1.3 1.3 0 0 1 10.8 7.5" fill="none" stroke="#a94a4a" stroke-width="0.5" opacity="0.5"/><circle cx="26.0" cy="4.2" r="1.1" fill="#ffd6d2" opacity="0.45"/><path d="M24.9 3.9 A1.1 1.1 0 0 1 27.1 3.9" fill="none" stroke="#a94a4a" stroke-width="0.5" opacity="0.5"/><circle cx="38.0" cy="27.3" r="0.9" fill="#ffd6d2" opacity="0.45"/><path d="M37.1 27.0 A0.9 0.9 0 0 1 38.9 27.0" fill="none" stroke="#a94a4a" stroke-width="0.5" opacity="0.5"/><circle cx="-2.0" cy="27.3" r="0.9" fill="#ffd6d2" opacity="0.45"/><path d="M-2.9 27.0 A0.9 0.9 0 0 1 -1.1 27.0" fill="none" stroke="#a94a4a" stroke-width="0.5" opacity="0.5"/><circle cx="17.5" cy="34.5" r="0.9" fill="#ffd6d2" opacity="0.45"/><path d="M16.6 34.2 A0.9 0.9 0 0 1 18.4 34.2" fill="none" stroke="#a94a4a" stroke-width="0.5" opacity="0.5"/><circle cx="3.2" cy="30.0" r="0.9" fill="#ffd6d2" opacity="0.45"/><path d="M2.3 29.7 A0.9 0.9 0 0 1 4.1 29.7" fill="none" stroke="#a94a4a" stroke-width="0.5" opacity="0.5"/><circle cx="35.4" cy="18.3" r="0.9" fill="#ffd6d2" opacity="0.45"/><path d="M34.5 18.0 A0.9 0.9 0 0 1 36.3 18.0" fill="none" stroke="#a94a4a" stroke-width="0.5" opacity="0.5"/><circle cx="31.5" cy="1.6" r="0.9" fill="#ffd6d2" opacity="0.45"/><path d="M30.6 1.4 A0.9 0.9 0 0 1 32.4 1.4" fill="none" stroke="#a94a4a" stroke-width="0.5" opacity="0.5"/><circle cx="31.5" cy="41.6" r="0.9" fill="#ffd6d2" opacity="0.45"/><path d="M30.6 41.4 A0.9 0.9 0 0 1 32.4 41.4" fill="none" stroke="#a94a4a" stroke-width="0.5" opacity="0.5"/><circle cx="12.6" cy="33.7" r="0.9" fill="#ffd6d2" opacity="0.45"/><path d="M11.7 33.4 A0.9 0.9 0 0 1 13.5 33.4" fill="none" stroke="#a94a4a" stroke-width="0.5" opacity="0.5"/><circle cx="34.5" cy="13.8" r="0.7" fill="#ffd6d2" opacity="0.45"/><path d="M33.8 13.6 A0.7 0.7 0 0 1 35.2 13.6" fill="none" stroke="#a94a4a" stroke-width="0.5" opacity="0.5"/><circle cx="32.3" cy="14.1" r="0.9" fill="#ffd6d2" opacity="0.45"/><path d="M31.4 13.8 A0.9 0.9 0 0 1 33.2 13.8" fill="none" stroke="#a94a4a" stroke-width="0.5" opacity="0.5"/><circle cx="16.9" cy="21.1" r="1.1" fill="#ffd6d2" opacity="0.45"/><path d="M15.8 20.7 A1.1 1.1 0 0 1 18.0 20.7" fill="none" stroke="#a94a4a" stroke-width="0.5" opacity="0.5"/><circle cx="18.6" cy="25.7" r="1.1" fill="#ffd6d2" opacity="0.45"/><path d="M17.5 25.4 A1.1 1.1 0 0 1 19.7 25.4" fill="none" stroke="#a94a4a" stroke-width="0.5" opacity="0.5"/><circle cx="16.8" cy="16.8" r="1.3" fill="#ffd6d2" opacity="0.45"/><path d="M15.5 16.4 A1.3 1.3 0 0 1 18.1 16.4" fill="none" stroke="#a94a4a" stroke-width="0.5" opacity="0.5"/><circle cx="6.2" cy="0.6" r="1.3" fill="#ffd6d2" opacity="0.45"/><path d="M4.9 0.2 A1.3 1.3 0 0 1 7.5 0.2" fill="none" stroke="#a94a4a" stroke-width="0.5" opacity="0.5"/><circle cx="6.2" cy="40.6" r="1.3" fill="#ffd6d2" opacity="0.45"/><path d="M4.9 40.2 A1.3 1.3 0 0 1 7.5 40.2" fill="none" stroke="#a94a4a" stroke-width="0.5" opacity="0.5"/><circle cx="22.4" cy="39.7" r="0.9" fill="#ffd6d2" opacity="0.45"/><path d="M21.5 39.4 A0.9 0.9 0 0 1 23.3 39.4" fill="none" stroke="#a94a4a" stroke-width="0.5" opacity="0.5"/><circle cx="22.4" cy="-0.3" r="0.9" fill="#ffd6d2" opacity="0.45"/><path d="M21.5 -0.6 A0.9 0.9 0 0 1 23.3 -0.6" fill="none" stroke="#a94a4a" stroke-width="0.5" opacity="0.5"/><circle cx="1.3" cy="18.6" r="1.1" fill="#ffd6d2" opacity="0.45"/><path d="M0.2 18.3 A1.1 1.1 0 0 1 2.4 18.3" fill="none" stroke="#a94a4a" stroke-width="0.5" opacity="0.5"/><circle cx="41.3" cy="18.6" r="1.1" fill="#ffd6d2" opacity="0.45"/><path d="M40.2 18.3 A1.1 1.1 0 0 1 42.4 18.3" fill="none" stroke="#a94a4a" stroke-width="0.5" opacity="0.5"/><circle cx="21.8" cy="35.8" r="0.7" fill="#ffd6d2" opacity="0.45"/><path d="M21.1 35.6 A0.7 0.7 0 0 1 22.5 35.6" fill="none" stroke="#a94a4a" stroke-width="0.5" opacity="0.5"/><circle cx="34.3" cy="39.0" r="0.7" fill="#ffd6d2" opacity="0.45"/><path d="M33.6 38.8 A0.7 0.7 0 0 1 35.0 38.8" fill="none" stroke="#a94a4a" stroke-width="0.5" opacity="0.5"/><circle cx="34.3" cy="-1.0" r="0.7" fill="#ffd6d2" opacity="0.45"/><path d="M33.6 -1.2 A0.7 0.7 0 0 1 35.0 -1.2" fill="none" stroke="#a94a4a" stroke-width="0.5" opacity="0.5"/><circle cx="32.4" cy="2.1" r="0.9" fill="#ffd6d2" opacity="0.45"/><path d="M31.5 1.8 A0.9 0.9 0 0 1 33.3 1.8" fill="none" stroke="#a94a4a" stroke-width="0.5" opacity="0.5"/><circle cx="32.4" cy="42.1" r="0.9" fill="#ffd6d2" opacity="0.45"/><path d="M31.5 41.8 A0.9 0.9 0 0 1 33.3 41.8" fill="none" stroke="#a94a4a" stroke-width="0.5" opacity="0.5"/><circle cx="35.9" cy="36.2" r="0.7" fill="#ffd6d2" opacity="0.45"/><path d="M35.2 36.0 A0.7 0.7 0 0 1 36.6 36.0" fill="none" stroke="#a94a4a" stroke-width="0.5" opacity="0.5"/></pattern>
<pattern id="pDotsB" x="0" y="0" width="40" height="40" patternUnits="userSpaceOnUse"><circle cx="24.9" cy="29.9" r="0.7" fill="#e0f2f8" opacity="0.45"/><path d="M24.2 29.7 A0.7 0.7 0 0 1 25.6 29.7" fill="none" stroke="#4f7f90" stroke-width="0.5" opacity="0.5"/><circle cx="33.6" cy="31.3" r="0.9" fill="#e0f2f8" opacity="0.45"/><path d="M32.7 31.0 A0.9 0.9 0 0 1 34.5 31.0" fill="none" stroke="#4f7f90" stroke-width="0.5" opacity="0.5"/><circle cx="26.0" cy="36.2" r="0.7" fill="#e0f2f8" opacity="0.45"/><path d="M25.3 36.0 A0.7 0.7 0 0 1 26.7 36.0" fill="none" stroke="#4f7f90" stroke-width="0.5" opacity="0.5"/><circle cx="14.9" cy="35.1" r="1.3" fill="#e0f2f8" opacity="0.45"/><path d="M13.6 34.7 A1.3 1.3 0 0 1 16.2 34.7" fill="none" stroke="#4f7f90" stroke-width="0.5" opacity="0.5"/><circle cx="21.8" cy="23.2" r="0.7" fill="#e0f2f8" opacity="0.45"/><path d="M21.1 23.0 A0.7 0.7 0 0 1 22.5 23.0" fill="none" stroke="#4f7f90" stroke-width="0.5" opacity="0.5"/><circle cx="29.2" cy="16.6" r="0.9" fill="#e0f2f8" opacity="0.45"/><path d="M28.3 16.3 A0.9 0.9 0 0 1 30.1 16.3" fill="none" stroke="#4f7f90" stroke-width="0.5" opacity="0.5"/><circle cx="36.7" cy="30.9" r="0.9" fill="#e0f2f8" opacity="0.45"/><path d="M35.8 30.6 A0.9 0.9 0 0 1 37.6 30.6" fill="none" stroke="#4f7f90" stroke-width="0.5" opacity="0.5"/><circle cx="30.5" cy="3.3" r="1.3" fill="#e0f2f8" opacity="0.45"/><path d="M29.2 2.9 A1.3 1.3 0 0 1 31.8 2.9" fill="none" stroke="#4f7f90" stroke-width="0.5" opacity="0.5"/><circle cx="30.5" cy="43.3" r="1.3" fill="#e0f2f8" opacity="0.45"/><path d="M29.2 42.9 A1.3 1.3 0 0 1 31.8 42.9" fill="none" stroke="#4f7f90" stroke-width="0.5" opacity="0.5"/><circle cx="5.1" cy="0.3" r="0.7" fill="#e0f2f8" opacity="0.45"/><path d="M4.4 0.1 A0.7 0.7 0 0 1 5.8 0.1" fill="none" stroke="#4f7f90" stroke-width="0.5" opacity="0.5"/><circle cx="5.1" cy="40.3" r="0.7" fill="#e0f2f8" opacity="0.45"/><path d="M4.4 40.1 A0.7 0.7 0 0 1 5.8 40.1" fill="none" stroke="#4f7f90" stroke-width="0.5" opacity="0.5"/><circle cx="8.4" cy="8.9" r="0.9" fill="#e0f2f8" opacity="0.45"/><path d="M7.5 8.6 A0.9 0.9 0 0 1 9.3 8.6" fill="none" stroke="#4f7f90" stroke-width="0.5" opacity="0.5"/><circle cx="34.9" cy="11.8" r="0.9" fill="#e0f2f8" opacity="0.45"/><path d="M34.0 11.6 A0.9 0.9 0 0 1 35.8 11.6" fill="none" stroke="#4f7f90" stroke-width="0.5" opacity="0.5"/><circle cx="21.6" cy="27.4" r="0.9" fill="#e0f2f8" opacity="0.45"/><path d="M20.7 27.1 A0.9 0.9 0 0 1 22.5 27.1" fill="none" stroke="#4f7f90" stroke-width="0.5" opacity="0.5"/><circle cx="7.3" cy="39.0" r="0.9" fill="#e0f2f8" opacity="0.45"/><path d="M6.4 38.7 A0.9 0.9 0 0 1 8.2 38.7" fill="none" stroke="#4f7f90" stroke-width="0.5" opacity="0.5"/><circle cx="7.3" cy="-1.0" r="0.9" fill="#e0f2f8" opacity="0.45"/><path d="M6.4 -1.3 A0.9 0.9 0 0 1 8.2 -1.3" fill="none" stroke="#4f7f90" stroke-width="0.5" opacity="0.5"/><circle cx="38.7" cy="36.1" r="1.1" fill="#e0f2f8" opacity="0.45"/><path d="M37.6 35.7 A1.1 1.1 0 0 1 39.8 35.7" fill="none" stroke="#4f7f90" stroke-width="0.5" opacity="0.5"/><circle cx="-1.3" cy="36.1" r="1.1" fill="#e0f2f8" opacity="0.45"/><path d="M-2.4 35.7 A1.1 1.1 0 0 1 -0.2 35.7" fill="none" stroke="#4f7f90" stroke-width="0.5" opacity="0.5"/><circle cx="0.9" cy="16.9" r="0.9" fill="#e0f2f8" opacity="0.45"/><path d="M-0.0 16.6 A0.9 0.9 0 0 1 1.8 16.6" fill="none" stroke="#4f7f90" stroke-width="0.5" opacity="0.5"/><circle cx="40.9" cy="16.9" r="0.9" fill="#e0f2f8" opacity="0.45"/><path d="M40.0 16.6 A0.9 0.9 0 0 1 41.8 16.6" fill="none" stroke="#4f7f90" stroke-width="0.5" opacity="0.5"/><circle cx="10.6" cy="13.5" r="0.7" fill="#e0f2f8" opacity="0.45"/><path d="M9.9 13.3 A0.7 0.7 0 0 1 11.3 13.3" fill="none" stroke="#4f7f90" stroke-width="0.5" opacity="0.5"/><circle cx="23.8" cy="28.5" r="0.7" fill="#e0f2f8" opacity="0.45"/><path d="M23.1 28.3 A0.7 0.7 0 0 1 24.5 28.3" fill="none" stroke="#4f7f90" stroke-width="0.5" opacity="0.5"/><circle cx="12.4" cy="33.1" r="1.3" fill="#e0f2f8" opacity="0.45"/><path d="M11.1 32.7 A1.3 1.3 0 0 1 13.7 32.7" fill="none" stroke="#4f7f90" stroke-width="0.5" opacity="0.5"/><circle cx="27.9" cy="7.8" r="1.3" fill="#e0f2f8" opacity="0.45"/><path d="M26.6 7.4 A1.3 1.3 0 0 1 29.2 7.4" fill="none" stroke="#4f7f90" stroke-width="0.5" opacity="0.5"/><circle cx="28.2" cy="2.5" r="0.7" fill="#e0f2f8" opacity="0.45"/><path d="M27.5 2.3 A0.7 0.7 0 0 1 28.9 2.3" fill="none" stroke="#4f7f90" stroke-width="0.5" opacity="0.5"/><circle cx="28.2" cy="42.5" r="0.7" fill="#e0f2f8" opacity="0.45"/><path d="M27.5 42.3 A0.7 0.7 0 0 1 28.9 42.3" fill="none" stroke="#4f7f90" stroke-width="0.5" opacity="0.5"/><circle cx="38.0" cy="14.7" r="1.3" fill="#e0f2f8" opacity="0.45"/><path d="M36.7 14.3 A1.3 1.3 0 0 1 39.3 14.3" fill="none" stroke="#4f7f90" stroke-width="0.5" opacity="0.5"/><circle cx="-2.0" cy="14.7" r="1.3" fill="#e0f2f8" opacity="0.45"/><path d="M-3.3 14.3 A1.3 1.3 0 0 1 -0.7 14.3" fill="none" stroke="#4f7f90" stroke-width="0.5" opacity="0.5"/><circle cx="0.7" cy="31.8" r="1.1" fill="#e0f2f8" opacity="0.45"/><path d="M-0.4 31.5 A1.1 1.1 0 0 1 1.8 31.5" fill="none" stroke="#4f7f90" stroke-width="0.5" opacity="0.5"/><circle cx="40.7" cy="31.8" r="1.1" fill="#e0f2f8" opacity="0.45"/><path d="M39.6 31.5 A1.1 1.1 0 0 1 41.8 31.5" fill="none" stroke="#4f7f90" stroke-width="0.5" opacity="0.5"/><circle cx="15.1" cy="34.0" r="1.3" fill="#e0f2f8" opacity="0.45"/><path d="M13.8 33.6 A1.3 1.3 0 0 1 16.4 33.6" fill="none" stroke="#4f7f90" stroke-width="0.5" opacity="0.5"/><circle cx="1.9" cy="7.5" r="0.9" fill="#e0f2f8" opacity="0.45"/><path d="M1.0 7.2 A0.9 0.9 0 0 1 2.8 7.2" fill="none" stroke="#4f7f90" stroke-width="0.5" opacity="0.5"/><circle cx="41.9" cy="7.5" r="0.9" fill="#e0f2f8" opacity="0.45"/><path d="M41.0 7.2 A0.9 0.9 0 0 1 42.8 7.2" fill="none" stroke="#4f7f90" stroke-width="0.5" opacity="0.5"/><circle cx="4.8" cy="10.2" r="1.3" fill="#e0f2f8" opacity="0.45"/><path d="M3.5 9.8 A1.3 1.3 0 0 1 6.1 9.8" fill="none" stroke="#4f7f90" stroke-width="0.5" opacity="0.5"/><circle cx="13.8" cy="14.5" r="1.1" fill="#e0f2f8" opacity="0.45"/><path d="M12.7 14.2 A1.1 1.1 0 0 1 14.9 14.2" fill="none" stroke="#4f7f90" stroke-width="0.5" opacity="0.5"/><circle cx="31.0" cy="4.7" r="1.1" fill="#e0f2f8" opacity="0.45"/><path d="M29.9 4.3 A1.1 1.1 0 0 1 32.1 4.3" fill="none" stroke="#4f7f90" stroke-width="0.5" opacity="0.5"/><circle cx="34.4" cy="1.7" r="0.7" fill="#e0f2f8" opacity="0.45"/><path d="M33.7 1.5 A0.7 0.7 0 0 1 35.1 1.5" fill="none" stroke="#4f7f90" stroke-width="0.5" opacity="0.5"/><circle cx="34.4" cy="41.7" r="0.7" fill="#e0f2f8" opacity="0.45"/><path d="M33.7 41.5 A0.7 0.7 0 0 1 35.1 41.5" fill="none" stroke="#4f7f90" stroke-width="0.5" opacity="0.5"/><circle cx="8.3" cy="20.8" r="1.1" fill="#e0f2f8" opacity="0.45"/><path d="M7.2 20.5 A1.1 1.1 0 0 1 9.4 20.5" fill="none" stroke="#4f7f90" stroke-width="0.5" opacity="0.5"/><circle cx="36.7" cy="13.8" r="0.7" fill="#e0f2f8" opacity="0.45"/><path d="M36.0 13.6 A0.7 0.7 0 0 1 37.4 13.6" fill="none" stroke="#4f7f90" stroke-width="0.5" opacity="0.5"/><circle cx="12.5" cy="12.9" r="0.9" fill="#e0f2f8" opacity="0.45"/><path d="M11.6 12.7 A0.9 0.9 0 0 1 13.4 12.7" fill="none" stroke="#4f7f90" stroke-width="0.5" opacity="0.5"/><circle cx="32.0" cy="25.4" r="1.1" fill="#e0f2f8" opacity="0.45"/><path d="M30.9 25.1 A1.1 1.1 0 0 1 33.1 25.1" fill="none" stroke="#4f7f90" stroke-width="0.5" opacity="0.5"/><circle cx="39.9" cy="6.7" r="0.7" fill="#e0f2f8" opacity="0.45"/><path d="M39.2 6.5 A0.7 0.7 0 0 1 40.6 6.5" fill="none" stroke="#4f7f90" stroke-width="0.5" opacity="0.5"/><circle cx="-0.1" cy="6.7" r="0.7" fill="#e0f2f8" opacity="0.45"/><path d="M-0.8 6.5 A0.7 0.7 0 0 1 0.6 6.5" fill="none" stroke="#4f7f90" stroke-width="0.5" opacity="0.5"/><circle cx="3.2" cy="24.4" r="1.3" fill="#e0f2f8" opacity="0.45"/><path d="M1.9 24.0 A1.3 1.3 0 0 1 4.5 24.0" fill="none" stroke="#4f7f90" stroke-width="0.5" opacity="0.5"/><circle cx="1.3" cy="30.0" r="1.1" fill="#e0f2f8" opacity="0.45"/><path d="M0.2 29.6 A1.1 1.1 0 0 1 2.4 29.6" fill="none" stroke="#4f7f90" stroke-width="0.5" opacity="0.5"/><circle cx="41.3" cy="30.0" r="1.1" fill="#e0f2f8" opacity="0.45"/><path d="M40.2 29.6 A1.1 1.1 0 0 1 42.4 29.6" fill="none" stroke="#4f7f90" stroke-width="0.5" opacity="0.5"/><circle cx="33.1" cy="18.6" r="1.3" fill="#e0f2f8" opacity="0.45"/><path d="M31.8 18.2 A1.3 1.3 0 0 1 34.4 18.2" fill="none" stroke="#4f7f90" stroke-width="0.5" opacity="0.5"/><circle cx="5.8" cy="39.4" r="0.7" fill="#e0f2f8" opacity="0.45"/><path d="M5.1 39.2 A0.7 0.7 0 0 1 6.5 39.2" fill="none" stroke="#4f7f90" stroke-width="0.5" opacity="0.5"/><circle cx="5.8" cy="-0.6" r="0.7" fill="#e0f2f8" opacity="0.45"/><path d="M5.1 -0.8 A0.7 0.7 0 0 1 6.5 -0.8" fill="none" stroke="#4f7f90" stroke-width="0.5" opacity="0.5"/><circle cx="32.1" cy="13.6" r="0.9" fill="#e0f2f8" opacity="0.45"/><path d="M31.2 13.4 A0.9 0.9 0 0 1 33.0 13.4" fill="none" stroke="#4f7f90" stroke-width="0.5" opacity="0.5"/><circle cx="5.2" cy="29.5" r="0.9" fill="#e0f2f8" opacity="0.45"/><path d="M4.3 29.3 A0.9 0.9 0 0 1 6.1 29.3" fill="none" stroke="#4f7f90" stroke-width="0.5" opacity="0.5"/><circle cx="25.2" cy="31.7" r="0.7" fill="#e0f2f8" opacity="0.45"/><path d="M24.5 31.5 A0.7 0.7 0 0 1 25.9 31.5" fill="none" stroke="#4f7f90" stroke-width="0.5" opacity="0.5"/><circle cx="6.8" cy="15.1" r="0.7" fill="#e0f2f8" opacity="0.45"/><path d="M6.1 14.9 A0.7 0.7 0 0 1 7.5 14.9" fill="none" stroke="#4f7f90" stroke-width="0.5" opacity="0.5"/><circle cx="33.8" cy="12.2" r="1.3" fill="#e0f2f8" opacity="0.45"/><path d="M32.5 11.8 A1.3 1.3 0 0 1 35.1 11.8" fill="none" stroke="#4f7f90" stroke-width="0.5" opacity="0.5"/><circle cx="36.9" cy="25.1" r="0.9" fill="#e0f2f8" opacity="0.45"/><path d="M36.0 24.8 A0.9 0.9 0 0 1 37.8 24.8" fill="none" stroke="#4f7f90" stroke-width="0.5" opacity="0.5"/><circle cx="39.0" cy="18.5" r="1.3" fill="#e0f2f8" opacity="0.45"/><path d="M37.7 18.1 A1.3 1.3 0 0 1 40.3 18.1" fill="none" stroke="#4f7f90" stroke-width="0.5" opacity="0.5"/><circle cx="-1.0" cy="18.5" r="1.3" fill="#e0f2f8" opacity="0.45"/><path d="M-2.3 18.1 A1.3 1.3 0 0 1 0.3 18.1" fill="none" stroke="#4f7f90" stroke-width="0.5" opacity="0.5"/><circle cx="27.6" cy="13.0" r="1.1" fill="#e0f2f8" opacity="0.45"/><path d="M26.5 12.7 A1.1 1.1 0 0 1 28.7 12.7" fill="none" stroke="#4f7f90" stroke-width="0.5" opacity="0.5"/><circle cx="11.6" cy="16.4" r="0.9" fill="#e0f2f8" opacity="0.45"/><path d="M10.7 16.2 A0.9 0.9 0 0 1 12.5 16.2" fill="none" stroke="#4f7f90" stroke-width="0.5" opacity="0.5"/><circle cx="4.5" cy="33.2" r="0.9" fill="#e0f2f8" opacity="0.45"/><path d="M3.6 32.9 A0.9 0.9 0 0 1 5.4 32.9" fill="none" stroke="#4f7f90" stroke-width="0.5" opacity="0.5"/><circle cx="25.1" cy="20.3" r="1.1" fill="#e0f2f8" opacity="0.45"/><path d="M24.0 20.0 A1.1 1.1 0 0 1 26.2 20.0" fill="none" stroke="#4f7f90" stroke-width="0.5" opacity="0.5"/><circle cx="7.2" cy="20.0" r="1.1" fill="#e0f2f8" opacity="0.45"/><path d="M6.1 19.7 A1.1 1.1 0 0 1 8.3 19.7" fill="none" stroke="#4f7f90" stroke-width="0.5" opacity="0.5"/><circle cx="2.5" cy="32.1" r="1.1" fill="#e0f2f8" opacity="0.45"/><path d="M1.4 31.8 A1.1 1.1 0 0 1 3.6 31.8" fill="none" stroke="#4f7f90" stroke-width="0.5" opacity="0.5"/><circle cx="42.5" cy="32.1" r="1.1" fill="#e0f2f8" opacity="0.45"/><path d="M41.4 31.8 A1.1 1.1 0 0 1 43.6 31.8" fill="none" stroke="#4f7f90" stroke-width="0.5" opacity="0.5"/><circle cx="27.8" cy="26.9" r="1.1" fill="#e0f2f8" opacity="0.45"/><path d="M26.7 26.6 A1.1 1.1 0 0 1 28.9 26.6" fill="none" stroke="#4f7f90" stroke-width="0.5" opacity="0.5"/><circle cx="14.5" cy="28.5" r="1.1" fill="#e0f2f8" opacity="0.45"/><path d="M13.4 28.2 A1.1 1.1 0 0 1 15.6 28.2" fill="none" stroke="#4f7f90" stroke-width="0.5" opacity="0.5"/><circle cx="33.4" cy="10.9" r="1.1" fill="#e0f2f8" opacity="0.45"/><path d="M32.3 10.6 A1.1 1.1 0 0 1 34.5 10.6" fill="none" stroke="#4f7f90" stroke-width="0.5" opacity="0.5"/><circle cx="38.3" cy="13.9" r="0.9" fill="#e0f2f8" opacity="0.45"/><path d="M37.4 13.6 A0.9 0.9 0 0 1 39.2 13.6" fill="none" stroke="#4f7f90" stroke-width="0.5" opacity="0.5"/><circle cx="-1.7" cy="13.9" r="0.9" fill="#e0f2f8" opacity="0.45"/><path d="M-2.6 13.6 A0.9 0.9 0 0 1 -0.8 13.6" fill="none" stroke="#4f7f90" stroke-width="0.5" opacity="0.5"/><circle cx="23.2" cy="0.8" r="1.1" fill="#e0f2f8" opacity="0.45"/><path d="M22.1 0.5 A1.1 1.1 0 0 1 24.3 0.5" fill="none" stroke="#4f7f90" stroke-width="0.5" opacity="0.5"/><circle cx="23.2" cy="40.8" r="1.1" fill="#e0f2f8" opacity="0.45"/><path d="M22.1 40.5 A1.1 1.1 0 0 1 24.3 40.5" fill="none" stroke="#4f7f90" stroke-width="0.5" opacity="0.5"/><circle cx="13.0" cy="11.3" r="1.1" fill="#e0f2f8" opacity="0.45"/><path d="M11.9 10.9 A1.1 1.1 0 0 1 14.1 10.9" fill="none" stroke="#4f7f90" stroke-width="0.5" opacity="0.5"/><circle cx="32.7" cy="26.2" r="1.1" fill="#e0f2f8" opacity="0.45"/><path d="M31.6 25.9 A1.1 1.1 0 0 1 33.8 25.9" fill="none" stroke="#4f7f90" stroke-width="0.5" opacity="0.5"/><circle cx="13.9" cy="26.2" r="1.3" fill="#e0f2f8" opacity="0.45"/><path d="M12.6 25.8 A1.3 1.3 0 0 1 15.2 25.8" fill="none" stroke="#4f7f90" stroke-width="0.5" opacity="0.5"/><circle cx="14.0" cy="34.1" r="1.3" fill="#e0f2f8" opacity="0.45"/><path d="M12.7 33.7 A1.3 1.3 0 0 1 15.3 33.7" fill="none" stroke="#4f7f90" stroke-width="0.5" opacity="0.5"/><circle cx="39.0" cy="38.5" r="0.9" fill="#e0f2f8" opacity="0.45"/><path d="M38.1 38.3 A0.9 0.9 0 0 1 39.9 38.3" fill="none" stroke="#4f7f90" stroke-width="0.5" opacity="0.5"/><circle cx="39.0" cy="-1.5" r="0.9" fill="#e0f2f8" opacity="0.45"/><path d="M38.1 -1.7 A0.9 0.9 0 0 1 39.9 -1.7" fill="none" stroke="#4f7f90" stroke-width="0.5" opacity="0.5"/><circle cx="-1.0" cy="38.5" r="0.9" fill="#e0f2f8" opacity="0.45"/><path d="M-1.9 38.3 A0.9 0.9 0 0 1 -0.1 38.3" fill="none" stroke="#4f7f90" stroke-width="0.5" opacity="0.5"/><circle cx="-1.0" cy="-1.5" r="0.9" fill="#e0f2f8" opacity="0.45"/><path d="M-1.9 -1.7 A0.9 0.9 0 0 1 -0.1 -1.7" fill="none" stroke="#4f7f90" stroke-width="0.5" opacity="0.5"/></pattern>
<linearGradient id="gHP" x1="0" y1="0" x2="1" y2="0">
<stop offset="0" stop-color="#d9d9d9"/><stop offset="0.05" stop-color="#ececec"/><stop offset="0.85" stop-color="#e9e9e9"/><stop offset="0.97" stop-color="#c4c4c4"/><stop offset="1" stop-color="#b0b0b0"/>
</linearGradient>
<linearGradient id="gStand" x1="0" y1="0" x2="1" y2="0">
<stop offset="0" stop-color="#8e8e8e"/><stop offset="0.5" stop-color="#fafafa"/><stop offset="1" stop-color="#7e7e7e"/>
</linearGradient>
<radialGradient id="gFanRing" cx="0.5" cy="0.5" r="0.5">
<stop offset="0.8" stop-color="#bdbdbd"/><stop offset="0.86" stop-color="#9a9a9a"/><stop offset="1" stop-color="#8a8a8a"/>
</radialGradient>
<linearGradient id="gPlate" x1="0" y1="0" x2="1" y2="0"><stop offset="0" stop-color="#6f7478"/><stop offset="0.5" stop-color="#b0b4b8"/><stop offset="1" stop-color="#6f7478"/></linearGradient>
<linearGradient id="gMount" x1="0" y1="0" x2="0" y2="1"><stop offset="0" stop-color="#4d5a66"/><stop offset="0.15" stop-color="#66737f"/><stop offset="0.85" stop-color="#66737f"/><stop offset="1" stop-color="#4d5a66"/></linearGradient>
<linearGradient id="gFanOuter" x1="0" y1="0" x2="1" y2="1"><stop offset="0" stop-color="#a8a8a8"/><stop offset="1" stop-color="#7c7c7c"/></linearGradient>
<radialGradient id="gFanIn" cx="0.5" cy="0.5" r="0.5"><stop offset="0" stop-color="#9a9a9a"/><stop offset="0.4" stop-color="#c6c6c6"/><stop offset="1" stop-color="#a9a9a9"/></radialGradient>
<linearGradient id="gGreenVert" x1="0" y1="0" x2="0" y2="1"><stop offset="0" stop-color="#226f2f"/><stop offset="0.45" stop-color="#3d9a4a"/><stop offset="0.55" stop-color="#5aab66"/><stop offset="1" stop-color="#2a7d37"/></linearGradient>
<linearGradient id="gFin" x1="0" y1="0" x2="0" y2="1"><stop offset="0" stop-color="#3a7a44"/><stop offset="1" stop-color="#5d9a66"/></linearGradient>
<linearGradient id="gPumpBase" x1="0" y1="0" x2="1" y2="0"><stop offset="0" stop-color="#2a7d37"/><stop offset="0.3" stop-color="#3d9a4a"/><stop offset="0.7" stop-color="#5aab66"/><stop offset="1" stop-color="#3d9a4a"/></linearGradient>
<linearGradient id="gBowl" x1="0" y1="0" x2="1" y2="0"><stop offset="0" stop-color="#9c9c9c"/><stop offset="0.15" stop-color="#c9c9c9"/><stop offset="0.4" stop-color="#f0f0f0"/><stop offset="0.6" stop-color="#eeeeee"/><stop offset="0.85" stop-color="#c4c4c4"/><stop offset="1" stop-color="#9a9a9a"/></linearGradient>
<linearGradient id="gStand2" x1="0" y1="0" x2="1" y2="0"><stop offset="0" stop-color="#7e7e7e"/><stop offset="0.5" stop-color="#fbfbfb"/><stop offset="1" stop-color="#7a7a7a"/></linearGradient>
<linearGradient id="gPlate2" x1="0" y1="0" x2="1" y2="0.3"><stop offset="0" stop-color="#eeeeee"/><stop offset="0.5" stop-color="#b9b9b9"/><stop offset="1" stop-color="#707070"/></linearGradient>
<filter id="shd" x="-10%" y="-10%" width="120%" height="130%"><feDropShadow dx="0" dy="1" stdDeviation="1.2" flood-color="#000" flood-opacity="0.3"/></filter>
</defs>

<rect x="544.5" y="235" width="20" height="427" fill="url(#gV)"/><rect x="564.5" y="215.0" width="129.5" height="20" fill="url(#gH)"/><radialGradient id="e564_235" cx="564.5" cy="235" r="20" gradientUnits="userSpaceOnUse"><stop offset="0" stop-color="#a8a8a8"/><stop offset="0.5" stop-color="#f6f6f6"/><stop offset="0.72" stop-color="#d0d0d0"/><stop offset="0.93" stop-color="#7f7f7f"/><stop offset="1" stop-color="#8c8c8c"/></radialGradient><path d="M564.5 235 L544.5 235 A20 20 0 0 1 564.5 215 Z" fill="url(#e564_235)"/><line x1="564.5" y1="235" x2="550.36" y2="220.86" stroke="#ffffff" stroke-width="0.8" opacity="0.6"/><rect x="578.2" y="211.0" width="3.6" height="28" rx="1.5" fill="url(#gFl)" stroke="#8f8f8f" stroke-width="0.6"/><rect x="582.4000000000001" y="211.0" width="3.6" height="28" rx="1.5" fill="url(#gFl)" stroke="#8f8f8f" stroke-width="0.6"/><rect x="689.5" y="211.0" width="3.6" height="28" rx="1.5" fill="url(#gFl)" stroke="#8f8f8f" stroke-width="0.6"/><rect x="540.5" y="249.3" width="28" height="3.6" rx="1.5" fill="url(#gFlV)" stroke="#8f8f8f" stroke-width="0.6"/><rect x="540.5" y="253.5" width="28" height="3.6" rx="1.5" fill="url(#gFlV)" stroke="#8f8f8f" stroke-width="0.6"/><rect x="540.5" y="360.5" width="28" height="3.6" rx="1.5" fill="url(#gFlV)" stroke="#8f8f8f" stroke-width="0.6"/><rect x="540.5" y="364.70000000000005" width="28" height="3.6" rx="1.5" fill="url(#gFlV)" stroke="#8f8f8f" stroke-width="0.6"/><rect x="540.5" y="417.2" width="28" height="3.6" rx="1.5" fill="url(#gFlV)" stroke="#8f8f8f" stroke-width="0.6"/><rect x="540.5" y="421.40000000000003" width="28" height="3.6" rx="1.5" fill="url(#gFlV)" stroke="#8f8f8f" stroke-width="0.6"/><rect x="540.5" y="472.4" width="28" height="3.6" rx="1.5" fill="url(#gFlV)" stroke="#8f8f8f" stroke-width="0.6"/><rect x="540.5" y="476.6" width="28" height="3.6" rx="1.5" fill="url(#gFlV)" stroke="#8f8f8f" stroke-width="0.6"/><rect x="540.5" y="583.7" width="28" height="3.6" rx="1.5" fill="url(#gFlV)" stroke="#8f8f8f" stroke-width="0.6"/><rect x="540.5" y="587.9000000000001" width="28" height="3.6" rx="1.5" fill="url(#gFlV)" stroke="#8f8f8f" stroke-width="0.6"/><rect x="540.5" y="640.6" width="28" height="3.6" rx="1.5" fill="url(#gFlV)" stroke="#8f8f8f" stroke-width="0.6"/><rect x="540.5" y="644.8000000000001" width="28" height="3.6" rx="1.5" fill="url(#gFlV)" stroke="#8f8f8f" stroke-width="0.6"/><rect x="362.5" y="606.0" width="182.0" height="20" fill="url(#gH)"/><rect x="359.2" y="602.0" width="3.6" height="28" rx="1.5" fill="url(#gFl)" stroke="#8f8f8f" stroke-width="0.6"/><rect x="411" y="602.0" width="3.6" height="28" rx="1.5" fill="url(#gFl)" stroke="#8f8f8f" stroke-width="0.6"/><rect x="415.20000000000005" y="602.0" width="3.6" height="28" rx="1.5" fill="url(#gFl)" stroke="#8f8f8f" stroke-width="0.6"/><rect x="466.8" y="602.0" width="3.6" height="28" rx="1.5" fill="url(#gFl)" stroke="#8f8f8f" stroke-width="0.6"/><rect x="471.00000000000006" y="602.0" width="3.6" height="28" rx="1.5" fill="url(#gFl)" stroke="#8f8f8f" stroke-width="0.6"/><rect x="522.7" y="602.0" width="3.6" height="28" rx="1.5" fill="url(#gFl)" stroke="#8f8f8f" stroke-width="0.6"/><rect x="526.9000000000001" y="602.0" width="3.6" height="28" rx="1.5" fill="url(#gFl)" stroke="#8f8f8f" stroke-width="0.6"/><path d="M475 605.5 C491.695 601.0 506.00500000000005 601.0 522.7 605.5 L522.7 626.5 C506.00500000000005 631.0 491.695 631.0 475 626.5 Z" fill="url(#gGreenH)"/><rect x="498.1" y="613.8" width="26.600000000000023" height="4.4" fill="url(#gFlV)"/><circle cx="498.1" cy="616" r="6.8" fill="#2f8a3e" stroke="#d0d0d0" stroke-width="1.6"/><path d="M495.7936 613.6936 A3.7199999999999998 3.7199999999999998 0 1 0 500.4064 613.6936" fill="none" stroke="#cfe8d2" stroke-width="0.9"/><line x1="498.1" y1="612.094" x2="498.1" y2="615.628" stroke="#cfe8d2" stroke-width="0.9"/><rect x="544.5" y="606" width="20" height="20" fill="url(#gV)"/><path d="M544.5 606 L564.5 626 M564.5 606 L544.5 626" stroke="#fff" stroke-width="0.8" opacity="0.6"/><rect x="564.5" y="606.0" width="147.5" height="20" fill="url(#gH)"/><rect x="578" y="602.0" width="3.6" height="28" rx="1.5" fill="url(#gFl)" stroke="#8f8f8f" stroke-width="0.6"/><rect x="582.2" y="602.0" width="3.6" height="28" rx="1.5" fill="url(#gFl)" stroke="#8f8f8f" stroke-width="0.6"/><rect x="689.4" y="602.0" width="3.6" height="28" rx="1.5" fill="url(#gFl)" stroke="#8f8f8f" stroke-width="0.6"/><rect x="693.6" y="602.0" width="3.6" height="28" rx="1.5" fill="url(#gFl)" stroke="#8f8f8f" stroke-width="0.6"/><radialGradient id="e712_606" cx="712" cy="606" r="20" gradientUnits="userSpaceOnUse"><stop offset="0" stop-color="#a8a8a8"/><stop offset="0.5" stop-color="#f6f6f6"/><stop offset="0.72" stop-color="#d0d0d0"/><stop offset="0.93" stop-color="#7f7f7f"/><stop offset="1" stop-color="#8c8c8c"/></radialGradient><path d="M712 606 L732 606 A20 20 0 0 1 712 626 Z" fill="url(#e712_606)"/><line x1="712" y1="606" x2="726.14" y2="620.14" stroke="#ffffff" stroke-width="0.8" opacity="0.6"/><rect x="712.0" y="421" width="20" height="185" fill="url(#gV)"/><rect x="708.0" y="421" width="28" height="3.6" rx="1.5" fill="url(#gFlV)" stroke="#8f8f8f" stroke-width="0.6"/><rect x="708.0" y="472.2" width="28" height="3.6" rx="1.5" fill="url(#gFlV)" stroke="#8f8f8f" stroke-width="0.6"/><rect x="708.0" y="476.40000000000003" width="28" height="3.6" rx="1.5" fill="url(#gFlV)" stroke="#8f8f8f" stroke-width="0.6"/><rect x="708.0" y="529.2" width="28" height="3.6" rx="1.5" fill="url(#gFlV)" stroke="#8f8f8f" stroke-width="0.6"/><rect x="708.0" y="533.4000000000001" width="28" height="3.6" rx="1.5" fill="url(#gFlV)" stroke="#8f8f8f" stroke-width="0.6"/><rect x="708.0" y="584.2" width="28" height="3.6" rx="1.5" fill="url(#gFlV)" stroke="#8f8f8f" stroke-width="0.6"/><rect x="708.0" y="588.4000000000001" width="28" height="3.6" rx="1.5" fill="url(#gFlV)" stroke="#8f8f8f" stroke-width="0.6"/><radialGradient id="e564_662" cx="564.5" cy="662" r="20" gradientUnits="userSpaceOnUse"><stop offset="0" stop-color="#a8a8a8"/><stop offset="0.5" stop-color="#f6f6f6"/><stop offset="0.72" stop-color="#d0d0d0"/><stop offset="0.93" stop-color="#7f7f7f"/><stop offset="1" stop-color="#8c8c8c"/></radialGradient><path d="M564.5 662 L544.5 662 A20 20 0 0 0 564.5 682 Z" fill="url(#e564_662)"/><line x1="564.5" y1="662" x2="550.36" y2="676.14" stroke="#ffffff" stroke-width="0.8" opacity="0.6"/><rect x="564.5" y="662.0" width="189.5" height="20" fill="url(#gH)"/><rect x="578" y="658.0" width="3.6" height="28" rx="1.5" fill="url(#gFl)" stroke="#8f8f8f" stroke-width="0.6"/><rect x="582.2" y="658.0" width="3.6" height="28" rx="1.5" fill="url(#gFl)" stroke="#8f8f8f" stroke-width="0.6"/><rect x="635" y="658.0" width="3.6" height="28" rx="1.5" fill="url(#gFl)" stroke="#8f8f8f" stroke-width="0.6"/><rect x="639.2" y="658.0" width="3.6" height="28" rx="1.5" fill="url(#gFl)" stroke="#8f8f8f" stroke-width="0.6"/><rect x="690.6" y="658.0" width="3.6" height="28" rx="1.5" fill="url(#gFl)" stroke="#8f8f8f" stroke-width="0.6"/><rect x="694.8000000000001" y="658.0" width="3.6" height="28" rx="1.5" fill="url(#gFl)" stroke="#8f8f8f" stroke-width="0.6"/><rect x="746.3" y="658.0" width="3.6" height="28" rx="1.5" fill="url(#gFl)" stroke="#8f8f8f" stroke-width="0.6"/><rect x="750.5" y="658.0" width="3.6" height="28" rx="1.5" fill="url(#gFl)" stroke="#8f8f8f" stroke-width="0.6"/><path d="M645 643 L687.6 643 L687.6 686 L645 686 Z" fill="url(#gFilt)"/><path d="M647 689 L685.5 689 L684 730 Q684 747 666 747 Q648.5 747 648.5 730 Z" fill="url(#gFilt)"/><rect x="644.5" y="685.5" width="43.5" height="3.4" rx="1" fill="#c9c9c9" stroke="#8a8a8a" stroke-width="0.5"/><path d="M544.0 368.6 C539.5 385.54 539.5 400.06 544.0 417 L565.0 417 C569.5 400.06 569.5 385.54 565.0 368.6 Z" fill="url(#gGreenV)"/><rect x="552.3" y="366.6" width="4.4" height="24.0" fill="url(#gFl)"/><circle cx="554.5" cy="392.6" r="6.8" fill="#2f8a3e" stroke="#d0d0d0" stroke-width="1.6"/><path d="M552.1936 390.2936 A3.7199999999999998 3.7199999999999998 0 1 0 556.8064 390.2936" fill="none" stroke="#cfe8d2" stroke-width="0.9"/><line x1="554.5" y1="388.694" x2="554.5" y2="392.228" stroke="#cfe8d2" stroke-width="0.9"/><path d="M711.5 479.5 C707.0 496.89500000000004 707.0 511.805 711.5 529.2 L732.5 529.2 C737.0 511.805 737.0 496.89500000000004 732.5 479.5 Z" fill="url(#gGreenV)"/><rect x="719.8" y="477.5" width="4.4" height="24.80000000000001" fill="url(#gFl)"/><circle cx="722" cy="504.3" r="6.8" fill="#2f8a3e" stroke="#d0d0d0" stroke-width="1.6"/><path d="M719.6936 501.9936 A3.7199999999999998 3.7199999999999998 0 1 0 724.3064 501.9936" fill="none" stroke="#cfe8d2" stroke-width="0.9"/><line x1="722" y1="500.394" x2="722" y2="503.928" stroke="#cfe8d2" stroke-width="0.9"/><rect x="768.0" y="570" width="20" height="16" fill="url(#gV)"/><radialGradient id="e788_570" cx="788" cy="570" r="20" gradientUnits="userSpaceOnUse"><stop offset="0" stop-color="#a8a8a8"/><stop offset="0.5" stop-color="#f6f6f6"/><stop offset="0.72" stop-color="#d0d0d0"/><stop offset="0.93" stop-color="#7f7f7f"/><stop offset="1" stop-color="#8c8c8c"/></radialGradient><path d="M788 570 L768 570 A20 20 0 0 1 788 550 Z" fill="url(#e788_570)"/><line x1="788" y1="570" x2="773.86" y2="555.86" stroke="#ffffff" stroke-width="0.8" opacity="0.6"/><rect x="788" y="550.0" width="142" height="20" fill="url(#gH)"/><rect x="763.0" y="583.5" width="29" height="3.2" rx="1.5" fill="url(#gFlV)" stroke="#8f8f8f" stroke-width="0.6"/><rect x="763.0" y="587.3000000000001" width="29" height="3.2" rx="1.5" fill="url(#gFlV)" stroke="#8f8f8f" stroke-width="0.6"/><rect x="801.5" y="546.0" width="3.6" height="28" rx="1.5" fill="url(#gFl)" stroke="#8f8f8f" stroke-width="0.6"/><rect x="805.7" y="546.0" width="3.6" height="28" rx="1.5" fill="url(#gFl)" stroke="#8f8f8f" stroke-width="0.6"/><rect x="857.2" y="546.0" width="3.6" height="28" rx="1.5" fill="url(#gFl)" stroke="#8f8f8f" stroke-width="0.6"/><rect x="861.4000000000001" y="546.0" width="3.6" height="28" rx="1.5" fill="url(#gFl)" stroke="#8f8f8f" stroke-width="0.6"/><rect x="912.9" y="546.0" width="3.6" height="28" rx="1.5" fill="url(#gFl)" stroke="#8f8f8f" stroke-width="0.6"/><rect x="917.1" y="546.0" width="3.6" height="28" rx="1.5" fill="url(#gFl)" stroke="#8f8f8f" stroke-width="0.6"/><path d="M865.5 549.5 C882.125 545.0 896.375 545.0 913 549.5 L913 570.5 C896.375 575.0 882.125 575.0 865.5 570.5 Z" fill="url(#gGreenH)"/><rect x="889" y="557.8" width="26" height="4.4" fill="url(#gFlV)"/><circle cx="889" cy="560" r="6.8" fill="#2f8a3e" stroke="#d0d0d0" stroke-width="1.6"/><path d="M886.6936 557.6936 A3.7199999999999998 3.7199999999999998 0 1 0 891.3064 557.6936" fill="none" stroke="#cfe8d2" stroke-width="0.9"/><line x1="889" y1="556.094" x2="889" y2="559.628" stroke="#cfe8d2" stroke-width="0.9"/><rect x="757.4" y="747" width="180" height="8.6" fill="url(#gPumpBase)"/><rect x="763.2" y="720" width="28" height="27.5" fill="url(#gGreenV)"/><circle cx="777" cy="745" r="1.3" fill="#24702f"/><rect x="808.5" y="729.6" width="130" height="5.2" fill="#2f8a3d"/><rect x="816.6" y="734.7" width="24.5" height="12.5" fill="url(#gGreenV)"/><rect x="908.3" y="734.7" width="24.5" height="12.5" fill="url(#gGreenV)"/><path d="M834 717 L922 717 L929 730 L828 730 Z" fill="url(#gGreenV)"/><path d="M837 634.5 L837 623 Q837 617.7 843 617.7 L911 617.7 Q916.8 617.7 916.8 623 L916.8 634.5 Z" fill="url(#gGreenV)"/><rect x="807.3" y="634.4" width="130" height="83.1" rx="2" fill="url(#gGreenVert)"/><svg x="0" y="0" width="1917" height="991" overflow="visible"><rect x="820" y="636.0" width="118" height="2.2" fill="#274d2f"/><rect x="820" y="638.2" width="118" height="3.8" fill="url(#gFin)"/><rect x="820" y="642.0" width="118" height="2.2" fill="#274d2f"/><rect x="820" y="644.2" width="118" height="3.8" fill="url(#gFin)"/><rect x="820" y="648.0" width="118" height="2.2" fill="#274d2f"/><rect x="820" y="650.2" width="118" height="3.8" fill="url(#gFin)"/><rect x="820" y="654.0" width="118" height="2.2" fill="#274d2f"/><rect x="820" y="656.2" width="118" height="3.8" fill="url(#gFin)"/><rect x="820" y="660.0" width="118" height="2.2" fill="#274d2f"/><rect x="820" y="662.2" width="118" height="3.8" fill="url(#gFin)"/><rect x="820" y="666.0" width="118" height="2.2" fill="#274d2f"/><rect x="820" y="668.2" width="118" height="3.8" fill="url(#gFin)"/><rect x="820" y="672.0" width="118" height="2.2" fill="#274d2f"/><rect x="820" y="674.2" width="118" height="3.8" fill="url(#gFin)"/><rect x="820" y="678.0" width="118" height="2.2" fill="#274d2f"/><rect x="820" y="680.2" width="118" height="3.8" fill="url(#gFin)"/><rect x="820" y="684.0" width="118" height="2.2" fill="#274d2f"/><rect x="820" y="686.2" width="118" height="3.8" fill="url(#gFin)"/><rect x="820" y="690.0" width="118" height="2.2" fill="#274d2f"/><rect x="820" y="692.2" width="118" height="3.8" fill="url(#gFin)"/><rect x="820" y="696.0" width="118" height="2.2" fill="#274d2f"/><rect x="820" y="698.2" width="118" height="3.8" fill="url(#gFin)"/><rect x="820" y="702.0" width="118" height="2.2" fill="#274d2f"/><rect x="820" y="704.2" width="118" height="3.8" fill="url(#gFin)"/><rect x="820" y="708.0" width="118" height="2.2" fill="#274d2f"/><rect x="820" y="710.2" width="118" height="3.8" fill="url(#gFin)"/><rect x="820" y="714.0" width="118" height="2.2" fill="#274d2f"/><rect x="820" y="716.2" width="118" height="3.8" fill="url(#gFin)"/></svg><rect x="800.8" y="640.2" width="7.7" height="72" fill="url(#gGreenVert)"/><line x1="804.5" y1="641" x2="804.5" y2="711" stroke="#5aa866" stroke-width="0.5"/><path d="M764 608.4 Q767 618 764 626 Q758 633 758 645 L758 712 Q758 722.6 769 722.6 L785 722.6 Q796 722.6 796 712 L796 645 Q796 633 790 626 Q787 618 790 608.4 Z" fill="url(#gGreenVert)"/><rect x="752.8" y="646" width="7" height="60.4" rx="3" fill="url(#gGreenVert)"/><rect x="756.2" y="591.5" width="41.8" height="16.9" rx="1.5" fill="url(#gGreenV)"/><rect x="795.5" y="647" width="5.5" height="60" fill="url(#gGreenVert)"/><circle cx="799" cy="649.5" r="1.5" fill="#2a7a36" stroke="#5aa866" stroke-width="0.4"/><circle cx="799" cy="675.5" r="1.5" fill="#2a7a36" stroke="#5aa866" stroke-width="0.4"/><circle cx="799" cy="701" r="1.5" fill="#2a7a36" stroke="#5aa866" stroke-width="0.4"/><rect x="694" y="197" width="669" height="223" rx="2.5" fill="#7b7b7b"/><rect x="694" y="197" width="669" height="10.5" rx="2" fill="#6b737a"/><rect x="697.7" y="212" width="661.3" height="204.3" rx="1" fill="url(#gWater)"/><rect x="697.7" y="212" width="661.3" height="204.3" rx="1" fill="url(#pDots)"/><rect x="689" y="253.3" width="5" height="82.7" rx="1.5" fill="url(#gPlate)"/><rect x="679.1" y="274" width="10" height="41.7" rx="2" fill="url(#gMount)"/><circle cx="644.3" cy="294.5" r="33" fill="#6d6d6d"/><circle cx="644.3" cy="294.5" r="32.3" fill="#3a8a45"/><circle cx="644.3" cy="294.5" r="29.6" fill="#fff"/><path d="M617.8 294.5 A26.5 26.5 0 0 1 670.8 294.5" fill="none" stroke="#aaa" stroke-width="0.5"/><line x1="617.80" y1="294.50" x2="621.30" y2="294.50" stroke="#777" stroke-width="0.6"/><line x1="619.10" y1="286.31" x2="620.52" y2="286.77" stroke="#777" stroke-width="0.6"/><line x1="622.86" y1="278.92" x2="624.07" y2="279.81" stroke="#777" stroke-width="0.6"/><line x1="628.72" y1="273.06" x2="629.61" y2="274.27" stroke="#777" stroke-width="0.6"/><line x1="636.11" y1="269.30" x2="636.57" y2="270.72" stroke="#777" stroke-width="0.6"/><line x1="644.30" y1="268.00" x2="644.30" y2="271.50" stroke="#777" stroke-width="0.6"/><line x1="652.49" y1="269.30" x2="652.03" y2="270.72" stroke="#777" stroke-width="0.6"/><line x1="659.88" y1="273.06" x2="658.99" y2="274.27" stroke="#777" stroke-width="0.6"/><line x1="665.74" y1="278.92" x2="664.53" y2="279.81" stroke="#777" stroke-width="0.6"/><line x1="669.50" y1="286.31" x2="668.08" y2="286.77" stroke="#777" stroke-width="0.6"/><line x1="670.80" y1="294.50" x2="667.30" y2="294.50" stroke="#777" stroke-width="0.6"/><text x="644.3" y="282.7" font-size="8.5" font-weight="bold" fill="#555" text-anchor="middle">1/2</text><text x="627.5" y="298" font-size="7.5" fill="#555" text-anchor="middle">E</text><text x="661.5" y="298" font-size="7.5" fill="#555" text-anchor="middle">F</text><line x1="636" y1="294.6" x2="665" y2="294.3" stroke="#f26b2a" stroke-width="1.6"/><circle cx="644.3" cy="294.5" r="4" fill="#555"/><text x="640" y="312" font-size="4.5" fill="#777" text-anchor="middle">Water</text><rect x="652" y="309.5" width="4" height="0.7" fill="#777"/><rect x="652" y="311" width="4" height="0.7" fill="#777"/><rect x="1363.9" y="271" width="108" height="19.6" fill="#7c7c7c"/><rect x="1364" y="272.2" width="107.5" height="17.2" fill="url(#gRedH)"/><rect x="1364" y="272.2" width="107.5" height="17.2" fill="url(#pDotsR)"/><rect x="1363.9" y="267.5" width="3.6" height="27" rx="1.5" fill="url(#gFl)" stroke="#8f8f8f" stroke-width="0.6"/><rect x="1471.7" y="267.5" width="3.6" height="27" rx="1.5" fill="url(#gFl)" stroke="#8f8f8f" stroke-width="0.6"/><rect x="1475.8999999999999" y="267.5" width="3.6" height="27" rx="1.5" fill="url(#gFl)" stroke="#8f8f8f" stroke-width="0.6"/><path d="M1491 269 C1510 262 1525 261 1531 261 C1537 261 1552 262 1571 269 L1571 298 C1552 300 1537 301 1531 301 C1525 301 1510 300 1491 298 Z" fill="url(#gGreenH)"/><rect x="1478.9" y="261.3" width="12.4" height="39.8" rx="2" fill="url(#gGreenH)"/><rect x="1570.8" y="261.3" width="12.2" height="39.8" rx="2" fill="url(#gGreenH)"/><line x1="1531.0" y1="273.5" x2="1531.0" y2="256.5" stroke="#d9d9d9" stroke-width="2.6"/><line x1="1537.7" y1="278.3" x2="1553.8" y2="273.1" stroke="#d9d9d9" stroke-width="2.6"/><line x1="1535.1" y1="286.2" x2="1545.1" y2="299.9" stroke="#d9d9d9" stroke-width="2.6"/><line x1="1526.9" y1="286.2" x2="1516.9" y2="299.9" stroke="#d9d9d9" stroke-width="2.6"/><line x1="1524.3" y1="278.3" x2="1508.2" y2="273.1" stroke="#d9d9d9" stroke-width="2.6"/><circle cx="1531" cy="280.5" r="25" fill="none" stroke="#8a8a8a" stroke-width="5"/><circle cx="1531" cy="280.5" r="25" fill="none" stroke="#e0e0e0" stroke-width="3.2"/><circle cx="1531" cy="280.5" r="7.5" fill="#2f8a3e" stroke="#cfcfcf" stroke-width="1.8"/><path d="M1528.61672 278.11672 A3.844 3.844 0 1 0 1533.38328 278.11672" fill="none" stroke="#cfe8d2" stroke-width="0.9"/><line x1="1531" y1="276.4638" x2="1531" y2="280.1156" stroke="#cfe8d2" stroke-width="0.9"/><rect x="1590" y="271.0" width="127" height="20" fill="url(#gH)"/><rect x="1583.9" y="267.5" width="3.6" height="27" rx="1.5" fill="url(#gFl)" stroke="#8f8f8f" stroke-width="0.6"/><rect x="1588.1" y="267.5" width="3.6" height="27" rx="1.5" fill="url(#gFl)" stroke="#8f8f8f" stroke-width="0.6"/><rect x="1694.4" y="267.0" width="3.6" height="28" rx="1.5" fill="url(#gFl)" stroke="#8f8f8f" stroke-width="0.6"/><rect x="1698.6" y="267.0" width="3.6" height="28" rx="1.5" fill="url(#gFl)" stroke="#8f8f8f" stroke-width="0.6"/><radialGradient id="e1717_291" cx="1717" cy="291" r="20" gradientUnits="userSpaceOnUse"><stop offset="0" stop-color="#a8a8a8"/><stop offset="0.5" stop-color="#f6f6f6"/><stop offset="0.72" stop-color="#d0d0d0"/><stop offset="0.93" stop-color="#7f7f7f"/><stop offset="1" stop-color="#8c8c8c"/></radialGradient><path d="M1717 291 L1737 291 A20 20 0 0 0 1717 271 Z" fill="url(#e1717_291)"/><line x1="1717" y1="291" x2="1731.14" y2="276.86" stroke="#ffffff" stroke-width="0.8" opacity="0.6"/><rect x="1717.0" y="291" width="20" height="259" fill="url(#gV)"/><rect x="1717.3" y="424" width="19.4" height="104.5" fill="#7c7c7c"/><rect x="1718.5" y="424" width="17" height="104.5" fill="url(#gRedV)"/><rect x="1718.5" y="424" width="17" height="104.5" fill="url(#pDotsR)"/><rect x="1713.0" y="305.3" width="28" height="3.6" rx="1.5" fill="url(#gFlV)" stroke="#8f8f8f" stroke-width="0.6"/><rect x="1713.0" y="309.50000000000006" width="28" height="3.6" rx="1.5" fill="url(#gFlV)" stroke="#8f8f8f" stroke-width="0.6"/><rect x="1713.0" y="416.3" width="28" height="3.6" rx="1.5" fill="url(#gFlV)" stroke="#8f8f8f" stroke-width="0.6"/><rect x="1713.0" y="420.50000000000006" width="28" height="3.6" rx="1.5" fill="url(#gFlV)" stroke="#8f8f8f" stroke-width="0.6"/><rect x="1713.0" y="528.4" width="28" height="3.6" rx="1.5" fill="url(#gFlV)" stroke="#8f8f8f" stroke-width="0.6"/><rect x="1713.0" y="532.6" width="28" height="3.6" rx="1.5" fill="url(#gFlV)" stroke="#8f8f8f" stroke-width="0.6"/><radialGradient id="e1717_550" cx="1717" cy="550" r="20" gradientUnits="userSpaceOnUse"><stop offset="0" stop-color="#a8a8a8"/><stop offset="0.5" stop-color="#f6f6f6"/><stop offset="0.72" stop-color="#d0d0d0"/><stop offset="0.93" stop-color="#7f7f7f"/><stop offset="1" stop-color="#8c8c8c"/></radialGradient><path d="M1717 550 L1737 550 A20 20 0 0 1 1717 570 Z" fill="url(#e1717_550)"/><line x1="1717" y1="550" x2="1731.14" y2="564.14" stroke="#ffffff" stroke-width="0.8" opacity="0.6"/><rect x="1698" y="550.0" width="19" height="20" fill="url(#gH)"/><rect x="1698.3" y="546.5" width="3.6" height="27" rx="1.5" fill="url(#gFl)" stroke="#8f8f8f" stroke-width="0.6"/><path d="M1649.4 531.7 L1692.1 531.7 L1692.1 575.5 L1649.4 575.5 Z" fill="url(#gFilt)"/><path d="M1652 578.5 L1689.5 578.5 L1688 620 Q1688 635 1670.5 635 Q1653.5 635 1653.5 620 Z" fill="url(#gFilt)"/><rect x="1649" y="575.3" width="43.5" height="3.4" rx="1" fill="#c9c9c9" stroke="#8a8a8a" stroke-width="0.5"/><rect x="1692.9" y="546.5" width="3.6" height="27" rx="1.5" fill="url(#gFl)" stroke="#8f8f8f" stroke-width="0.6"/><rect x="1643.5" y="546.5" width="3.6" height="27" rx="1.5" fill="url(#gFl)" stroke="#8f8f8f" stroke-width="0.6"/><rect x="1643" y="523.6" width="55.1" height="117.9" fill="none" stroke="#fcd800" stroke-width="2"/><path d="M1668 852 L1728 852 L1736 859 L1661 859 Z" fill="url(#gStand2)"/><rect x="1656" y="858.7" width="84" height="8" rx="1.5" fill="url(#gPlate2)"/><rect x="1596.7" y="699.2" width="213.3" height="152.8" rx="3" fill="url(#gHP)" stroke="#c9c9c9" stroke-width="0.8"/><path d="M1617.8 775.3 C1655 825 1705 850 1757 852" fill="none" stroke="#bdbdbd" stroke-width="1"/><circle cx="1734.7" cy="777.2" r="50.5" fill="url(#gFanOuter)"/><circle cx="1734.7" cy="777.2" r="42.5" fill="#c9c9c9"/><circle cx="1734.7" cy="777.2" r="38.5" fill="url(#gFanIn)"/><circle cx="1781.2" cy="777.2" r="0.9" fill="#ececec"/><circle cx="1779.6" cy="789.2" r="0.9" fill="#ececec"/><circle cx="1775.0" cy="800.5" r="0.9" fill="#ececec"/><circle cx="1767.6" cy="810.1" r="0.9" fill="#ececec"/><circle cx="1758.0" cy="817.5" r="0.9" fill="#ececec"/><circle cx="1746.7" cy="822.1" r="0.9" fill="#ececec"/><circle cx="1734.7" cy="823.7" r="0.9" fill="#ececec"/><circle cx="1722.7" cy="822.1" r="0.9" fill="#ececec"/><circle cx="1711.5" cy="817.5" r="0.9" fill="#ececec"/><circle cx="1701.8" cy="810.1" r="0.9" fill="#ececec"/><circle cx="1694.4" cy="800.5" r="0.9" fill="#ececec"/><circle cx="1689.8" cy="789.2" r="0.9" fill="#ececec"/><circle cx="1688.2" cy="777.2" r="0.9" fill="#ececec"/><circle cx="1689.8" cy="765.2" r="0.9" fill="#ececec"/><circle cx="1694.4" cy="754.0" r="0.9" fill="#ececec"/><circle cx="1701.8" cy="744.3" r="0.9" fill="#ececec"/><circle cx="1711.5" cy="736.9" r="0.9" fill="#ececec"/><circle cx="1722.7" cy="732.3" r="0.9" fill="#ececec"/><circle cx="1734.7" cy="730.7" r="0.9" fill="#ececec"/><circle cx="1746.7" cy="732.3" r="0.9" fill="#ececec"/><circle cx="1758.0" cy="736.9" r="0.9" fill="#ececec"/><circle cx="1767.6" cy="744.3" r="0.9" fill="#ececec"/><circle cx="1775.0" cy="754.0" r="0.9" fill="#ececec"/><circle cx="1779.6" cy="765.2" r="0.9" fill="#ececec"/><ellipse cx="1721" cy="757.5" rx="17.5" ry="13" transform="rotate(-18 1721 757.5)" fill="#379643"/><ellipse cx="1759.5" cy="772.5" rx="13" ry="18" transform="rotate(-12 1759.5 772.5)" fill="#379643"/><ellipse cx="1730.5" cy="798.5" rx="17" ry="13.5" transform="rotate(14 1730.5 798.5)" fill="#379643"/><circle cx="1734.7" cy="777.2" r="14" fill="none" stroke="#707070" stroke-width="0.6" opacity="0.75"/><circle cx="1734.7" cy="777.2" r="24.5" fill="none" stroke="#707070" stroke-width="0.6" opacity="0.75"/><circle cx="1734.7" cy="777.2" r="35" fill="none" stroke="#707070" stroke-width="0.6" opacity="0.75"/><line x1="1781.7" y1="777.2" x2="1687.7" y2="777.2" stroke="#eeeeee" stroke-width="0.6"/><line x1="1767.9" y1="810.4" x2="1701.5" y2="744.0" stroke="#eeeeee" stroke-width="0.6"/><line x1="1734.7" y1="824.2" x2="1734.7" y2="730.2" stroke="#eeeeee" stroke-width="0.6"/><line x1="1701.5" y1="810.4" x2="1767.9" y2="744.0" stroke="#eeeeee" stroke-width="0.6"/><circle cx="1734.7" cy="777.2" r="8.5" fill="#f0f0f0"/><circle cx="1740.7" cy="777.2" r="0.5" fill="#888"/><circle cx="1738.9" cy="781.4" r="0.5" fill="#888"/><circle cx="1734.7" cy="783.2" r="0.5" fill="#888"/><circle cx="1730.5" cy="781.4" r="0.5" fill="#888"/><circle cx="1728.7" cy="777.2" r="0.5" fill="#888"/><circle cx="1730.5" cy="773.0" r="0.5" fill="#888"/><circle cx="1734.7" cy="771.2" r="0.5" fill="#888"/><circle cx="1738.9" cy="773.0" r="0.5" fill="#888"/><circle cx="1632.6" cy="822.3" r="11" fill="#3db54a"/><path d="M1629.1404 818.8403999999999 A5.58 5.58 0 1 0 1636.0595999999998 818.8403999999999" fill="none" stroke="#d5f0d8" stroke-width="1.1"/><line x1="1632.6" y1="816.4409999999999" x2="1632.6" y2="821.742" stroke="#d5f0d8" stroke-width="1.1"/><rect x="1600" y="719.1" width="71.5" height="22.3" rx="3" fill="#fff"/><text x="1641.4" y="735" font-size="12" font-weight="bold" fill="#333">36</text><circle cx="1659.4" cy="755.6" r="10.5" fill="#dedede"/><path d="M1655 753.5 L1664 753.5 L1659.5 758.5 Z" fill="#5b6b7b"/><circle cx="1634" cy="755.6" r="10.5" fill="#dedede"/><radialGradient id="e1457_774" cx="1457.6" cy="774" r="20" gradientUnits="userSpaceOnUse"><stop offset="0" stop-color="#a8a8a8"/><stop offset="0.5" stop-color="#f6f6f6"/><stop offset="0.72" stop-color="#d0d0d0"/><stop offset="0.93" stop-color="#7f7f7f"/><stop offset="1" stop-color="#8c8c8c"/></radialGradient><path d="M1457.6 774 L1437.6 774 A20 20 0 0 0 1457.6 794 Z" fill="url(#e1457_774)"/><line x1="1457.6" y1="774" x2="1443.4599999999998" y2="788.14" stroke="#ffffff" stroke-width="0.8" opacity="0.6"/><rect x="1457.6" y="774.0" width="139.4000000000001" height="20" fill="url(#gH)"/><rect x="1471.6" y="770.0" width="3.6" height="28" rx="1.5" fill="url(#gFl)" stroke="#8f8f8f" stroke-width="0.6"/><rect x="1475.7999999999997" y="770.0" width="3.6" height="28" rx="1.5" fill="url(#gFl)" stroke="#8f8f8f" stroke-width="0.6"/><rect x="1527.5" y="770.0" width="3.6" height="28" rx="1.5" fill="url(#gFl)" stroke="#8f8f8f" stroke-width="0.6"/><rect x="1531.6999999999998" y="770.0" width="3.6" height="28" rx="1.5" fill="url(#gFl)" stroke="#8f8f8f" stroke-width="0.6"/><rect x="1583.3" y="770.0" width="3.6" height="28" rx="1.5" fill="url(#gFl)" stroke="#8f8f8f" stroke-width="0.6"/><rect x="1587.4999999999998" y="770.0" width="3.6" height="28" rx="1.5" fill="url(#gFl)" stroke="#8f8f8f" stroke-width="0.6"/><path d="M1090.3 775 L1246.2 775 Q1238 787.5 1222 787.5 L1113 787.5 Q1097 787.5 1090.3 775 Z" fill="url(#gBowl)"/><path d="M1122.5 788.2 L1216.5 788.2 L1229.5 802.5 L1108.5 802.5 Z" fill="url(#gStand2)"/><rect x="1107.5" y="802.5" width="122" height="8.3" rx="1.8" fill="url(#gPlate2)"/><rect x="1270" y="760" width="20.3" height="103" fill="#7c7c7c"/><rect x="1271.2" y="760" width="17.9" height="103" fill="url(#gBlueV)"/><rect x="1271.2" y="760" width="17.9" height="103" fill="url(#pDotsB)"/><rect x="1265.9" y="862.7" width="28.2" height="3.6" rx="1.5" fill="url(#gFlV)" stroke="#8f8f8f" stroke-width="0.6"/><rect x="1265.9" y="866.9000000000001" width="28.2" height="3.6" rx="1.5" fill="url(#gFlV)" stroke="#8f8f8f" stroke-width="0.6"/><rect x="1270.2" y="871" width="20" height="14.200000000000045" fill="url(#gV)"/><radialGradient id="e1290_885" cx="1290.3" cy="885.2" r="20" gradientUnits="userSpaceOnUse"><stop offset="0" stop-color="#a8a8a8"/><stop offset="0.5" stop-color="#f6f6f6"/><stop offset="0.72" stop-color="#d0d0d0"/><stop offset="0.93" stop-color="#7f7f7f"/><stop offset="1" stop-color="#8c8c8c"/></radialGradient><path d="M1290.3 885.2 L1270.3 885.2 A20 20 0 0 0 1290.3 905.2 Z" fill="url(#e1290_885)"/><line x1="1290.3" y1="885.2" x2="1276.1599999999999" y2="899.34" stroke="#ffffff" stroke-width="0.8" opacity="0.6"/><rect x="1290.3" y="885.1" width="45.100000000000136" height="20" fill="url(#gH)"/><path d="M1335.4 886.6 Q1340.5 890 1342 893 Q1343.6 897 1344 902 Q1344.5 906 1346.5 907.8 Q1349 909 1351.5 909.4 Q1350.5 910.8 1348 911.3 L1357.5 911.2 Q1360.5 912 1361 913.3 Q1360 914.8 1358 914.9 L1348 914.8 Q1352.5 916.5 1353 918.5 Q1352.8 921.8 1350.8 921.8 Q1348.5 921 1347 919.2 Q1345.5 917.5 1344.5 917.2 Q1342 918.5 1340.5 919.9 Q1338.5 920 1337.7 917.5 Q1335 918.5 1332 920.5 Q1330.5 920 1331.3 918.6 Q1333 916.5 1333.8 914.8 Q1329 915.8 1325.5 915.5 Q1324 914.8 1325 913.8 Q1329 912.3 1332.8 911.7 Q1335 909 1335.6 906 Z" fill="#5a8fa3"/>
</svg>
<div style="position:absolute;left:303px;top:141px;width:195px;height:55.5px;background:#fff;border-radius:4px;box-shadow:0 3px 1px -2px rgba(0,0,0,0.2),0 2px 2px 0 rgba(0,0,0,0.14),0 1px 5px 0 rgba(0,0,0,0.12)"></div><div style="position:absolute;left:310px;top:147px;width:2.3px;height:44px;background:#3a934a;border-radius:1px"></div><div style="position:absolute;left:317.4px;top:148.18px;font-size:9px;line-height:9px;color:#9a9a9a;font-weight:normal;white-space:nowrap;">Status</div><div style="position:absolute;left:317.4px;top:159.40px;font-size:13px;line-height:13px;color:#2e8b3e;font-weight:normal;white-space:nowrap;">Active</div><div style="position:absolute;left:303px;top:225px;width:195px;height:55.5px;background:#fff;border-radius:4px;box-shadow:0 3px 1px -2px rgba(0,0,0,0.2),0 2px 2px 0 rgba(0,0,0,0.14),0 1px 5px 0 rgba(0,0,0,0.12)"></div><svg style="position:absolute;left:309.5px;top:247px;width:14px;height:14px" viewBox="0 0 24 24" ><path fill="#2e8b3e" d="M15 13V5c0-1.66-1.34-3-3-3S9 3.34 9 5v8c-1.21.91-2 2.37-2 4 0 2.76 2.24 5 5 5s5-2.24 5-5c0-1.63-.79-3.09-2-4z"/></svg><div style="position:absolute;left:329.2px;top:246.07px;font-size:13.5px;line-height:13.5px;color:#333;font-weight:normal;white-space:nowrap;transform:scaleX(0.94);transform-origin:0 0;">Outdoor</div><div style="position:absolute;left:387.7px;top:246.07px;font-size:13.5px;line-height:13.5px;color:#3a9a4a;font-weight:normal;white-space:nowrap;transform:scaleX(0.94);transform-origin:0 0;">25.8 °C</div><div style="position:absolute;left:303px;top:308.8px;width:195px;height:55.5px;background:#fff;border-radius:4px;box-shadow:0 3px 1px -2px rgba(0,0,0,0.2),0 2px 2px 0 rgba(0,0,0,0.14),0 1px 5px 0 rgba(0,0,0,0.12)"></div><svg style="position:absolute;left:309.5px;top:330.8px;width:14px;height:14px" viewBox="0 0 24 24" ><path fill="#2e8b3e" d="M15 13V5c0-1.66-1.34-3-3-3S9 3.34 9 5v8c-1.21.91-2 2.37-2 4 0 2.76 2.24 5 5 5s5-2.24 5-5c0-1.63-.79-3.09-2-4z"/></svg><div style="position:absolute;left:329.2px;top:329.87px;font-size:13.5px;line-height:13.5px;color:#333;font-weight:normal;white-space:nowrap;transform:scaleX(0.95);transform-origin:0 0;">Target</div><div style="position:absolute;left:377px;top:329.87px;font-size:13.5px;line-height:13.5px;color:#3a9a4a;font-weight:normal;white-space:nowrap;transform:scaleX(0.92);transform-origin:0 0;">36 °C</div><div style="position:absolute;left:303px;top:392.6px;width:195px;height:55.5px;background:#fff;border-radius:4px;box-shadow:0 3px 1px -2px rgba(0,0,0,0.2),0 2px 2px 0 rgba(0,0,0,0.14),0 1px 5px 0 rgba(0,0,0,0.12)"></div><svg style="position:absolute;left:309.5px;top:414.6px;width:14px;height:14px" viewBox="0 0 24 24" ><path fill="#2e8b3e" d="M15 13V5c0-1.66-1.34-3-3-3S9 3.34 9 5v8c-1.21.91-2 2.37-2 4 0 2.76 2.24 5 5 5s5-2.24 5-5c0-1.63-.79-3.09-2-4z"/></svg><div style="position:absolute;left:329.2px;top:413.67px;font-size:13.5px;line-height:13.5px;color:#333;font-weight:normal;white-space:nowrap;transform:scaleX(0.98);transform-origin:0 0;">Pool</div><div style="position:absolute;left:366.5px;top:413.67px;font-size:13.5px;line-height:13.5px;color:#3a9a4a;font-weight:normal;white-space:nowrap;transform:scaleX(0.95);transform-origin:0 0;">35.9 °C</div>
<div style="position:absolute;left:945px;top:141px;width:279px;height:28px;border:1.5px solid #555;border-radius:3px;background:#f2f2f2"></div><div style="position:absolute;left:948.3px;top:144px;width:135.4px;height:22px;background:#e0e0e0;border-radius:2px"></div><div style="position:absolute;left:1085px;top:144.7px;width:135.6px;height:21px;background:#1d6a5c;border-radius:3px"></div><div style="position:absolute;left:1000px;top:149.49px;font-size:11px;line-height:11px;color:#444;font-weight:bold;white-space:nowrap;transform:scaleX(0.865);transform-origin:0 0;">Hi-Perf</div><div style="position:absolute;left:1129px;top:149.49px;font-size:11px;line-height:11px;color:#fff;font-weight:bold;white-space:nowrap;transform:scaleX(0.854);transform-origin:0 0;">Traditional</div>
<div style="position:absolute;left:358.9px;top:559.9px;width:111.10000000000002px;height:28.200000000000045px;background:#fff;border-radius:3px;box-shadow:0 1px 3px rgba(0,0,0,0.3)"></div><div style="position:absolute;left:368.3px;top:565.03px;font-size:16.5px;line-height:16.5px;color:#222;font-weight:normal;white-space:nowrap;transform:scaleX(0.963);transform-origin:0 0;">Water supply</div><div style="position:absolute;left:1642.3px;top:476.2px;width:56.5px;height:28.5px;background:#fff;border-radius:3px;box-shadow:0 1px 3px rgba(0,0,0,0.3)"></div><div style="position:absolute;left:1661.3px;top:481.71px;font-size:17px;line-height:17px;color:#222;font-weight:normal;white-space:nowrap;">pH</div><div style="position:absolute;left:1307.6px;top:839.2px;width:111.40000000000009px;height:28.09999999999991px;background:#fff;border-radius:3px;box-shadow:0 1px 3px rgba(0,0,0,0.3)"></div><div style="position:absolute;left:1323.2px;top:844.03px;font-size:16.5px;line-height:16.5px;color:#222;font-weight:normal;white-space:nowrap;transform:scaleX(0.956);transform-origin:0 0;">Water drain</div>
<div style="position:absolute;left:929px;top:391.7px;width:712.4px;height:383.1px;background:#fff;border-radius:4px;box-shadow:0 0 20px rgba(0,0,0,0.17), 0 1px 4px rgba(0,0,0,0.1)"></div><svg style="position:absolute;left:1620px;top:402px;width:14px;height:14px" viewBox="0 0 14 14"><path d="M2.4 2.7 L10.6 11.2 M10.6 2.7 L2.4 11.2" stroke="#808080" stroke-width="2.5"/></svg><div style="position:absolute;left:956.9px;top:418.74px;font-size:12px;line-height:12px;color:#333;font-weight:bold;white-space:nowrap;transform:scaleX(0.876);transform-origin:0 0;">pH level</div><div style="position:absolute;left:956.9px;top:434.58px;font-size:9px;line-height:9px;color:#bbbbbb;font-weight:normal;white-space:nowrap;transform:scaleX(0.94);transform-origin:0 0;">Realtime - last 1 hour</div><svg style="position:absolute;left:0;top:0" width="1917" height="991" viewBox="0 0 1917 991"><circle cx="1237.8" cy="456.9" r="3" fill="#f5d22e"/><text x="1243.8" y="459.7" font-size="9" fill="#555">&lt; 6</text><circle cx="1275.4" cy="456.9" r="3" fill="#2e8b3e"/><text x="1281.7" y="459.7" font-size="9" fill="#555">6 - 8</text><circle cx="1318.1" cy="456.9" r="3" fill="#f5d22e"/><text x="1323.9" y="459.7" font-size="9" fill="#555">≥ 8</text><line x1="967" y1="607.6" x2="1613" y2="607.6" stroke="#e6e6e6" stroke-width="1"/><line x1="967" y1="486.6" x2="1610" y2="486.6" stroke="#5a5a5a" stroke-width="0.9" stroke-dasharray="2.6,1.6"/><circle cx="967" cy="486.6" r="2" fill="#222"/><path d="M1609 483.40000000000003 L1614 486.6 L1609 489.8 Z" fill="#333"/><line x1="967" y1="728.7" x2="1610" y2="728.7" stroke="#5a5a5a" stroke-width="0.9" stroke-dasharray="2.6,1.6"/><circle cx="967" cy="728.7" r="2" fill="#222"/><path d="M1609 725.5 L1614 728.7 L1609 731.9000000000001 Z" fill="#333"/><text x="957" y="489.5" font-size="9" fill="#666">8</text><text x="956.5" y="731.6" font-size="9" fill="#666">6</text><text x="957" y="610.6" font-size="9" fill="#666">7</text><text x="1602" y="478.8" font-size="9" fill="#333">8</text><text x="1602.4" y="720.9" font-size="9" fill="#333">6</text><line x1="984.6" y1="728.7" x2="984.6" y2="732.5" stroke="#666" stroke-width="0.8"/><text x="976.0" y="740.4" font-size="8" fill="#9a9a9a" textLength="17.2" lengthAdjust="spacingAndGlyphs">15:25</text><line x1="1038.5" y1="728.7" x2="1038.5" y2="732.5" stroke="#666" stroke-width="0.8"/><text x="1029.9" y="740.4" font-size="8" fill="#9a9a9a" textLength="17.2" lengthAdjust="spacingAndGlyphs">15:30</text><line x1="1092.4" y1="728.7" x2="1092.4" y2="732.5" stroke="#666" stroke-width="0.8"/><text x="1083.8" y="740.4" font-size="8" fill="#9a9a9a" textLength="17.2" lengthAdjust="spacingAndGlyphs">15:35</text><line x1="1146.3" y1="728.7" x2="1146.3" y2="732.5" stroke="#666" stroke-width="0.8"/><text x="1137.7" y="740.4" font-size="8" fill="#9a9a9a" textLength="17.2" lengthAdjust="spacingAndGlyphs">15:40</text><line x1="1200.2" y1="728.7" x2="1200.2" y2="732.5" stroke="#666" stroke-width="0.8"/><text x="1191.6" y="740.4" font-size="8" fill="#9a9a9a" textLength="17.2" lengthAdjust="spacingAndGlyphs">15:45</text><line x1="1254.1" y1="728.7" x2="1254.1" y2="732.5" stroke="#666" stroke-width="0.8"/><text x="1245.5" y="740.4" font-size="8" fill="#9a9a9a" textLength="17.2" lengthAdjust="spacingAndGlyphs">15:50</text><line x1="1308.0" y1="728.7" x2="1308.0" y2="732.5" stroke="#666" stroke-width="0.8"/><text x="1299.4" y="740.4" font-size="8" fill="#9a9a9a" textLength="17.2" lengthAdjust="spacingAndGlyphs">15:55</text><line x1="1361.9" y1="728.7" x2="1361.9" y2="732.5" stroke="#666" stroke-width="0.8"/><text x="1351.0" y="741.7" font-size="9" font-weight="bold" fill="#666" textLength="21.8" lengthAdjust="spacingAndGlyphs">16:00</text><line x1="1415.8" y1="728.7" x2="1415.8" y2="732.5" stroke="#666" stroke-width="0.8"/><text x="1407.2" y="740.4" font-size="8" fill="#9a9a9a" textLength="17.2" lengthAdjust="spacingAndGlyphs">16:05</text><line x1="1469.7" y1="728.7" x2="1469.7" y2="732.5" stroke="#666" stroke-width="0.8"/><text x="1461.1" y="740.4" font-size="8" fill="#9a9a9a" textLength="17.2" lengthAdjust="spacingAndGlyphs">16:10</text><line x1="1523.6" y1="728.7" x2="1523.6" y2="732.5" stroke="#666" stroke-width="0.8"/><text x="1515.0" y="740.4" font-size="8" fill="#9a9a9a" textLength="17.2" lengthAdjust="spacingAndGlyphs">16:15</text><line x1="1577.5" y1="728.7" x2="1577.5" y2="732.5" stroke="#666" stroke-width="0.8"/><text x="1568.9" y="740.4" font-size="8" fill="#9a9a9a" textLength="17.2" lengthAdjust="spacingAndGlyphs">16:20</text><polyline points="972.7,612.7 983.0,610.3 994.2,639.8 1004.8,635.5 1015.6,573.8 1026.3,593.8 1037.1,539.4 1048.2,565.7 1058.5,612.4 1069.3,610.3 1080.3,623.5 1091.1,643.6 1101.8,639.3 1112.6,654.9 1123.2,637.8 1134.0,605.0 1144.8,648.4 1155.5,632.5 1166.6,689.3 1177.5,660.4 1187.9,614.9 1198.7,608.9 1209.7,598.6 1220.5,604.7 1231.3,612.7 1241.9,617.9 1252.7,616.7 1263.4,605.9 1274.2,647.6 1284.8,621.8 1295.6,607.2 1306.6,593.5 1317.4,586.3 1328.1,617.9 1338.9,622.7 1349.7,579.4 1360.7,572.4 1371.5,583.5 1382.3,627.0 1393.0,619.6 1403.5,575.5 1414.5,628.6 1425.3,652.6 1435.9,599.5 1446.7,597.4 1457.6,628.3 1468.2,610.6 1479.0,600.3 1490.0,599.1 1500.8,590.4 1511.6,616.6 1522.2,607.7 1533.0,610.6 1544.2,611.8 1554.8,617.5 1565.4,595.5 1576.2,650.9 1587.1,612.7 1597.7,668.6 1608.5,653.2" fill="none" stroke="#389848" stroke-width="1.5" stroke-linejoin="miter"/></svg>
</body></html>
